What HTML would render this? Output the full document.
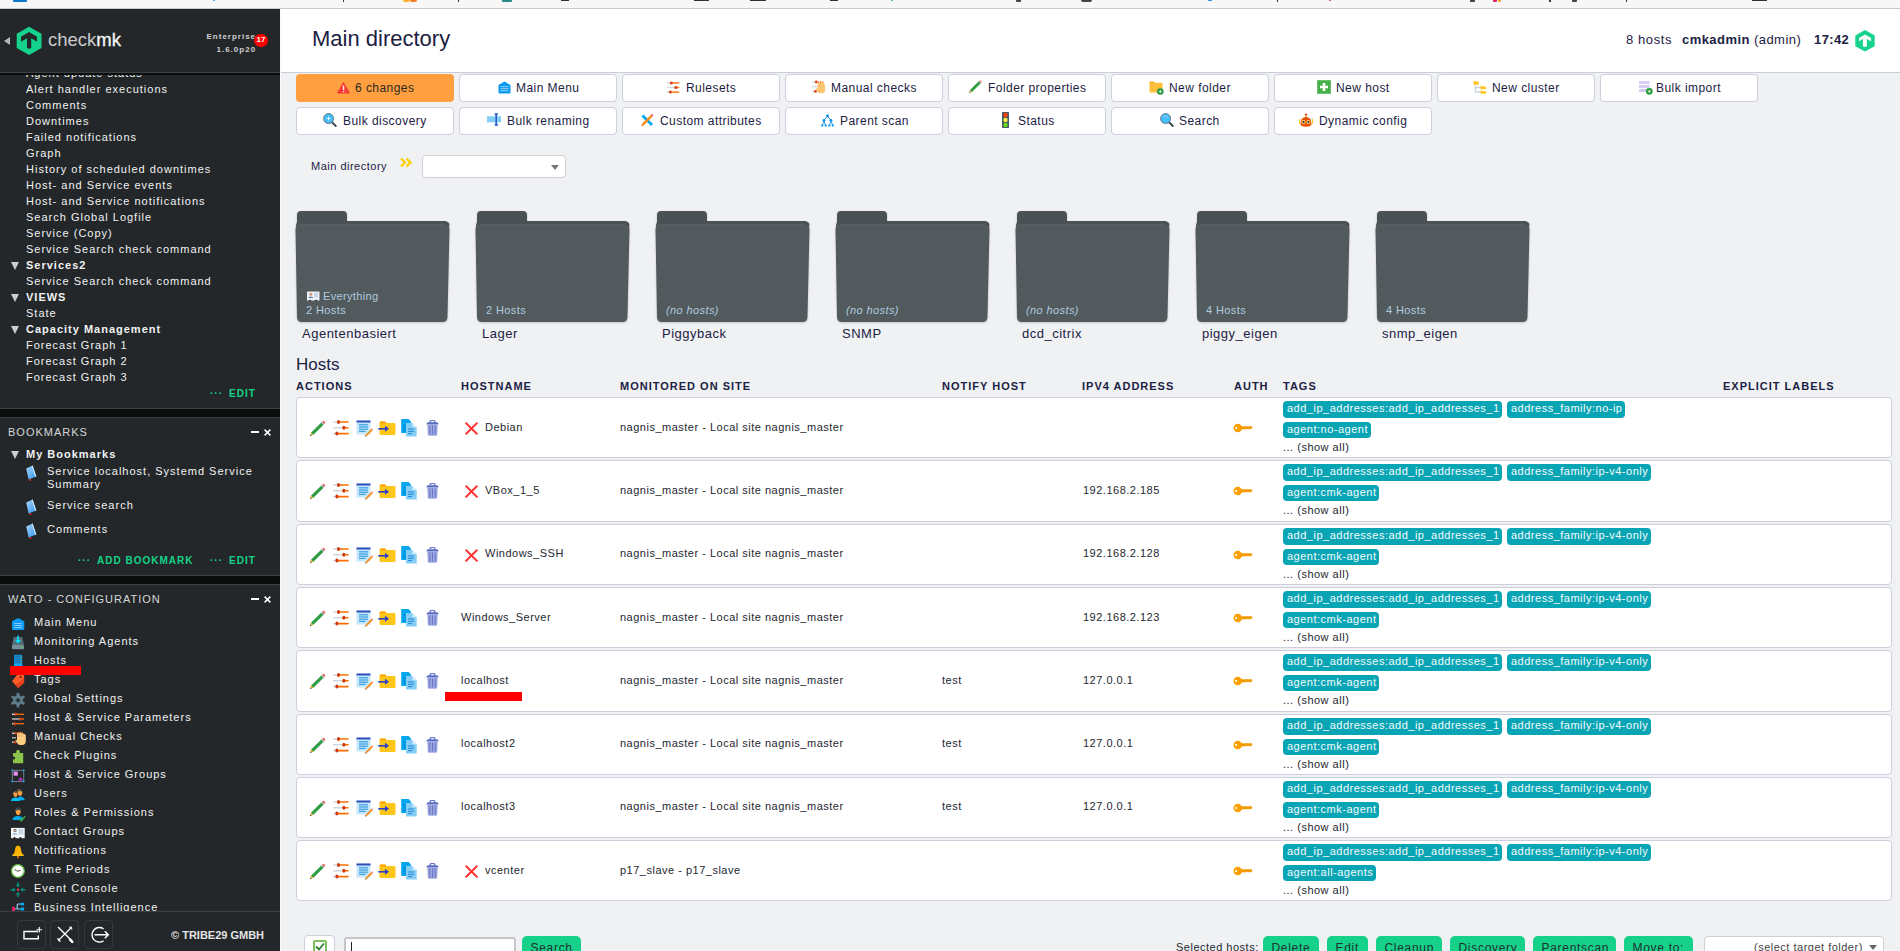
<!DOCTYPE html><html><head><meta charset="utf-8"><style>
*{margin:0;padding:0;box-sizing:border-box}
html,body{width:1900px;height:951px;overflow:hidden;background:#f0f1f3;font-family:"Liberation Sans",sans-serif;}
body{position:relative}
.A{position:absolute;white-space:nowrap}
#topbar{position:absolute;left:0;top:0;width:1900px;height:9px;background:#f7f7f7;border-bottom:1px solid #c9c9c9}
#sb{position:absolute;left:0;top:9px;width:280px;height:942px;background:#232729}
.st{position:absolute;white-space:nowrap;color:#f2f2f2;font-size:11px;letter-spacing:1px;line-height:16px;height:16px}
.b{font-weight:bold}
.tri{position:absolute;width:0;height:0;border-left:4.5px solid transparent;border-right:4.5px solid transparent;border-top:8px solid #cdcdcd}
.sep{position:absolute;left:0;width:280px;background:#0b0d0d;border-top:1px solid #3b4043;border-bottom:1px solid #3b4043}
#main{position:absolute;left:280px;top:9px;width:1620px;height:942px;background:#f0f1f3;border-left:1px solid #fafafb}
#hdr{position:absolute;left:281px;top:9px;width:1619px;height:64px;background:#fff;border-bottom:1px solid #cbcdd8}
.btn{position:absolute;width:158px;height:28px;background:#fff;border:1px solid #cdd0dc;border-radius:4px;font-size:13px;color:#1c2143;display:flex;align-items:center;justify-content:center;white-space:nowrap}
.btn svg{margin-right:6px;flex:none}
.g{color:#13d389}
.mt{position:absolute;white-space:nowrap;color:#1c2143;font-size:11px;letter-spacing:0.5px}
</style></head><body>
<div id="topbar"></div>
<div class="A" style="left:12.6px;top:0;width:14.6px;height:1.8px;background:#0b78c8;border-radius:0 0 1.5px 1.5px"></div>
<div class="A" style="left:212.5px;top:0;width:2.5px;height:1.2px;background:#1e88e5;border-radius:0 0 1px 1px"></div>
<div class="A" style="left:342.5px;top:0;width:1.3px;height:1.6px;background:#333;border-radius:0 0 0px 0px"></div>
<div class="A" style="left:403px;top:0;width:7px;height:1.7px;background:#ffb02e;border-radius:0 0 2px 2px"></div>
<div class="A" style="left:410px;top:0;width:7px;height:1.7px;background:#f57c20;border-radius:0 0 2px 2px"></div>
<div class="A" style="left:458px;top:0;width:1.3px;height:1.6px;background:#333;border-radius:0 0 0px 0px"></div>
<div class="A" style="left:502px;top:0;width:10px;height:1.8px;background:#2a8a8a;border-radius:0 0 1px 1px"></div>
<div class="A" style="left:561px;top:0;width:8px;height:0.8px;background:#333;border-radius:0 0 0px 0px"></div>
<div class="A" style="left:694px;top:0;width:15px;height:1px;background:#333;border-radius:0 0 0px 0px"></div>
<div class="A" style="left:750px;top:0;width:15.5px;height:1px;background:#333;border-radius:0 0 0px 0px"></div>
<div class="A" style="left:830px;top:0;width:8px;height:0.8px;background:#333;border-radius:0 0 0px 0px"></div>
<div class="A" style="left:890.5px;top:0;width:2.5px;height:1px;background:#15b070;border-radius:0 0 1px 1px"></div>
<div class="A" style="left:1015.5px;top:0;width:5px;height:1.5px;background:#444;border-radius:0 0 1px 1px"></div>
<div class="A" style="left:1081px;top:0;width:10.5px;height:1.5px;background:#444;border-radius:0 0 3px 3px"></div>
<div class="A" style="left:1207.5px;top:0;width:4px;height:1px;background:#1e88e5;border-radius:0 0 1px 1px"></div>
<div class="A" style="left:1276.5px;top:0;width:1.3px;height:1.8px;background:#333;border-radius:0 0 0px 0px"></div>
<div class="A" style="left:1328.5px;top:0;width:2.5px;height:0.8px;background:#d32f2f;border-radius:0 0 1px 1px"></div>
<div class="A" style="left:1470px;top:0;width:5px;height:1.6px;background:#444;border-radius:0 0 1px 1px"></div>
<div class="A" style="left:1493px;top:0;width:3.5px;height:1.8px;background:#e91e63;border-radius:0 0 1px 1px"></div>
<div class="A" style="left:1497.5px;top:0;width:3.5px;height:1.8px;background:#ffa726;border-radius:0 0 1px 1px"></div>
<div class="A" style="left:1549.3px;top:0;width:1.3px;height:1.8px;background:#333;border-radius:0 0 0px 0px"></div>
<div class="A" style="left:1572px;top:0;width:5px;height:1.6px;background:#444;border-radius:0 0 1px 1px"></div>
<div class="A" style="left:1625.8px;top:0;width:1.3px;height:1.8px;background:#333;border-radius:0 0 0px 0px"></div>
<div class="A" style="left:1752px;top:0;width:15px;height:0.8px;background:#333;border-radius:0 0 0px 0px"></div>
<div id="sb"></div>
<div id="main"></div>
<div id="hdr"></div>
<div class="A" style="left:4px;top:37px;width:0;height:0;border-top:4px solid transparent;border-bottom:4px solid transparent;border-right:6px solid #b4b6b7"></div>
<svg class="A" style="left:16px;top:26px" width="26" height="30" viewBox="0 0 26 30"><polygon points="13.1,0.7 25.5,7.8 25.5,22 13.1,29.1 0.7,22 0.7,7.8" fill="#15d38c"/><path d="M13 6 L20.9 10.8 L20.9 15.7 L15.2 12.3 L15.2 21.8 Q13.1 23.5 11 21.8 L11 12.3 L5 15.7 L5 10.8 Z" fill="#232729"/></svg>
<div class="A" style="left:48px;top:30px;font-size:18.5px;color:#c9cacb;line-height:20px;letter-spacing:0px">check<span style="color:#f6f6f6;-webkit-text-stroke:0.3px #f6f6f6">mk</span></div>
<div class="A" style="left:206.5px;top:32px;font-size:8px;font-weight:bold;color:#cfd0d1;letter-spacing:1px;line-height:10px">Enterprise</div>
<div class="A" style="left:216.5px;top:45px;font-size:8px;font-weight:bold;color:#cfd0d1;letter-spacing:1px;line-height:10px">1.6.0p20</div>
<div class="A" style="left:254px;top:34px;width:14px;height:12.5px;border-radius:7px;background:#f00;color:#fff;font-size:8px;font-weight:bold;text-align:center;line-height:12.5px">17</div>
<div class="A" style="left:0;top:72px;width:280px;height:1px;background:#3b4043"></div>
<div class="A" style="left:0;top:73px;width:280px;height:2px;background:#0b0d0d"></div>
<div class="A" style="left:0;top:75px;width:280px;height:333px;overflow:hidden"><div class="A" style="left:0;top:-75px;width:280px;height:600px">
<div class="st" style="left:26px;top:65px">Agent update status</div>
<div class="st" style="left:26px;top:81px">Alert handler executions</div>
<div class="st" style="left:26px;top:97px">Comments</div>
<div class="st" style="left:26px;top:113px">Downtimes</div>
<div class="st" style="left:26px;top:129px">Failed notifications</div>
<div class="st" style="left:26px;top:145px">Graph</div>
<div class="st" style="left:26px;top:161px">History of scheduled downtimes</div>
<div class="st" style="left:26px;top:177px">Host- and Service events</div>
<div class="st" style="left:26px;top:193px">Host- and Service notifications</div>
<div class="st" style="left:26px;top:209px">Search Global Logfile</div>
<div class="st" style="left:26px;top:225px">Service (Copy)</div>
<div class="st" style="left:26px;top:241px">Service Search check command</div>
<div class="tri" style="left:11px;top:262px"></div>
<div class="st b" style="left:26px;top:257px">Services2</div>
<div class="st" style="left:26px;top:273px">Service Search check command</div>
<div class="tri" style="left:11px;top:294px"></div>
<div class="st b" style="left:26px;top:289px">VIEWS</div>
<div class="st" style="left:26px;top:305px">State</div>
<div class="tri" style="left:11px;top:326px"></div>
<div class="st b" style="left:26px;top:321px">Capacity Management</div>
<div class="st" style="left:26px;top:337px">Forecast Graph 1</div>
<div class="st" style="left:26px;top:353px">Forecast Graph 2</div>
<div class="st" style="left:26px;top:369px">Forecast Graph 3</div>
<div class="st b g" style="left:210px;top:386px;font-size:10px">&middot;&middot;&middot;</div>
<div class="st b g" style="left:229px;top:386px;font-size:10px">EDIT</div>
</div></div>
<div class="sep" style="top:408px;height:10px"></div>
<div class="st" style="left:8px;top:424px;color:#d7d8d9">BOOKMARKS</div>
<div class="A" style="left:251px;top:431px;width:8px;height:2px;background:#fff"></div>
<svg class="A" style="left:263.5px;top:429px" width="7" height="7" viewBox="0 0 7 7"><path d="M0.6 0.6L6.4 6.4M6.4 0.6L0.6 6.4" stroke="#fff" stroke-width="1.5"/></svg>
<div class="tri" style="left:11px;top:451px"></div>
<div class="st b" style="left:26px;top:446px">My Bookmarks</div>
<svg class="A" style="left:25px;top:465px" width="14" height="17" viewBox="0 0 14 17"><defs><linearGradient id="bg465" x1="0" y1="0" x2="1" y2="1"><stop offset="0" stop-color="#a8d8fc"/><stop offset="1" stop-color="#2f94ee"/></linearGradient></defs><path d="M1.2 3.4 L7.6 0.5 L11.3 11.6 L3.6 14.5 Z" fill="url(#bg465)"/><path d="M7.6 0.5 L11.3 11.6 L10.2 12 L6.8 1 Z" fill="#d4ecfd"/><circle cx="5.3" cy="15" r="0.9" fill="#ff2a1a"/></svg>
<div class="st" style="left:47px;top:465px;line-height:13px;height:26px;white-space:normal;width:230px">Service localhost, Systemd Service Summary</div>
<svg class="A" style="left:25px;top:499px" width="14" height="17" viewBox="0 0 14 17"><defs><linearGradient id="bg499" x1="0" y1="0" x2="1" y2="1"><stop offset="0" stop-color="#a8d8fc"/><stop offset="1" stop-color="#2f94ee"/></linearGradient></defs><path d="M1.2 3.4 L7.6 0.5 L11.3 11.6 L3.6 14.5 Z" fill="url(#bg499)"/><path d="M7.6 0.5 L11.3 11.6 L10.2 12 L6.8 1 Z" fill="#d4ecfd"/><circle cx="5.3" cy="15" r="0.9" fill="#ff2a1a"/></svg>
<div class="st" style="left:47px;top:497px">Service search</div>
<svg class="A" style="left:25px;top:523px" width="14" height="17" viewBox="0 0 14 17"><defs><linearGradient id="bg523" x1="0" y1="0" x2="1" y2="1"><stop offset="0" stop-color="#a8d8fc"/><stop offset="1" stop-color="#2f94ee"/></linearGradient></defs><path d="M1.2 3.4 L7.6 0.5 L11.3 11.6 L3.6 14.5 Z" fill="url(#bg523)"/><path d="M7.6 0.5 L11.3 11.6 L10.2 12 L6.8 1 Z" fill="#d4ecfd"/><circle cx="5.3" cy="15" r="0.9" fill="#ff2a1a"/></svg>
<div class="st" style="left:47px;top:521px">Comments</div>
<div class="st b g" style="left:78px;top:553px;font-size:10px">&middot;&middot;&middot;</div>
<div class="st b g" style="left:97px;top:553px;font-size:10px">ADD BOOKMARK</div>
<div class="st b g" style="left:210px;top:553px;font-size:10px">&middot;&middot;&middot;</div>
<div class="st b g" style="left:229px;top:553px;font-size:10px">EDIT</div>
<div class="sep" style="top:575px;height:10px"></div>
<div class="st" style="left:8px;top:591px;color:#d7d8d9">WATO - CONFIGURATION</div>
<div class="A" style="left:251px;top:598px;width:8px;height:2px;background:#fff"></div>
<svg class="A" style="left:263.5px;top:596px" width="7" height="7" viewBox="0 0 7 7"><path d="M0.6 0.6L6.4 6.4M6.4 0.6L0.6 6.4" stroke="#fff" stroke-width="1.5"/></svg>
<div class="A" style="left:0;top:585px;width:280px;height:326px;overflow:hidden"><div class="A" style="left:0;top:-585px;width:280px;height:951px">
<div class="st" style="left:34px;top:614px">Main Menu</div>
<svg class="A" style="left:10px;top:614px" width="18" height="20" viewBox="0 0 18 20"><path d="M8.1 3.9 L14.3 7.3 L14.3 15 Q14.3 16.1 13.2 16.1 L3.1 16.1 Q2 16.1 2 15 L2 7.3 Z" fill="#0b9bf2"/><rect x="4.3" y="9" width="7.6" height="0.9" fill="#8fd0fb"/><rect x="4.3" y="11" width="7.6" height="0.9" fill="#8fd0fb"/><rect x="4.3" y="13" width="7.6" height="0.9" fill="#8fd0fb"/></svg>
<div class="st" style="left:34px;top:633px">Monitoring Agents</div>
<svg class="A" style="left:10px;top:633px" width="18" height="20" viewBox="0 0 18 20"><path d="M3.5 5 Q3.5 4 4.5 4 L11.5 4 Q12.5 4 12.5 5 L14 12 L2 12 Z" fill="#546e7a"/><rect x="2" y="12" width="12" height="4.2" rx="0.8" fill="#78909c"/><circle cx="12" cy="14.2" r="0.7" fill="#64dd17"/><rect x="7.2" y="2.6" width="1.6" height="5" fill="#00e5ff"/><path d="M5 7 L11 7 L8 10.5 Z" fill="#00e5ff"/></svg>
<div class="st" style="left:34px;top:652px">Hosts</div>
<svg class="A" style="left:10px;top:652px" width="18" height="20" viewBox="0 0 18 20"><rect x="4" y="2.8" width="8.2" height="11.4" fill="#0a8fd8"/><rect x="4" y="11.5" width="8.2" height="2.7" fill="#12a8f5"/><g fill="#2a5f8a"><rect x="5" y="4.2" width="5.5" height="0.7"/><rect x="5" y="6.2" width="5.5" height="0.7"/><rect x="5" y="8.2" width="5.5" height="0.7"/><rect x="5" y="10.2" width="5.5" height="0.7"/></g><g fill="#8bc34a"><rect x="10.6" y="4.1" width="0.9" height="0.9"/><rect x="10.6" y="6.1" width="0.9" height="0.9"/><rect x="10.6" y="8.1" width="0.9" height="0.9"/><rect x="10.6" y="10.1" width="0.9" height="0.9"/></g></svg>
<div class="st" style="left:34px;top:671px">Tags</div>
<svg class="A" style="left:10px;top:671px" width="18" height="20" viewBox="0 0 18 20"><path d="M7 4 L13 4 Q14.1 4 14.1 5.1 L14.1 11.8 L8.2 16.9 L2 10.3 Z" fill="#ff5a2a"/><path d="M14.1 7.5 L14.1 11.8 L8.2 16.9 L5.2 13.7 Z" fill="#e8401a"/><circle cx="10.6" cy="6" r="0.9" fill="#232729"/></svg>
<div class="st" style="left:34px;top:690px">Global Settings</div>
<svg class="A" style="left:10px;top:690px" width="18" height="20" viewBox="0 0 18 20"><g fill="#5f7d8a"><circle cx="8" cy="10.2" r="5"/><rect x="6.6" y="2.8" width="2.8" height="14.8" rx="0.8"/><rect x="6.6" y="2.8" width="2.8" height="14.8" rx="0.8" transform="rotate(60 8 10.2)"/><rect x="6.6" y="2.8" width="2.8" height="14.8" rx="0.8" transform="rotate(120 8 10.2)"/></g><circle cx="8" cy="10.2" r="2.6" fill="#4a6470"/><circle cx="8" cy="10.2" r="1.5" fill="#232729"/></svg>
<div class="st" style="left:34px;top:709px">Host &amp; Service Parameters</div>
<svg class="A" style="left:10px;top:709px" width="18" height="20" viewBox="0 0 18 20"><g stroke-width="1.3"><path d="M2 5.3 H5" stroke="#e8e8e8"/><path d="M5 5.3 H14" stroke="#ff6d00"/><path d="M2 10 H10" stroke="#d0d0d0"/><path d="M10 10 H14" stroke="#ff6d00"/><path d="M2 14.7 H3.8" stroke="#e8e8e8"/><path d="M3.8 14.7 H14" stroke="#ff6d00"/></g><ellipse cx="5.8" cy="5.3" rx="1.2" ry="1.7" fill="#d84315"/><ellipse cx="10.4" cy="10" rx="1.2" ry="1.7" fill="#d84315"/><ellipse cx="4.5" cy="14.7" rx="1.2" ry="1.7" fill="#d84315"/></svg>
<div class="st" style="left:34px;top:728px">Manual Checks</div>
<svg class="A" style="left:10px;top:728px" width="18" height="20" viewBox="0 0 18 20"><g stroke-width="1.2"><path d="M2 5.3 H5" stroke="#e8e8e8"/><path d="M2 9.8 H6" stroke="#c8c8c8"/><path d="M2 14.2 H4" stroke="#e8e8e8"/></g><circle cx="5.8" cy="5.3" r="1.2" fill="#d84315"/><circle cx="5" cy="14.3" r="1.3" fill="#d84315"/><path d="M7 6 Q7 4.5 8 4.5 Q8.9 4.5 9 5.4 Q9.2 4.2 10.1 4.2 Q11 4.2 11.1 5.4 Q11.4 4.5 12.2 4.6 Q13 4.8 13 6 Q13.4 5.6 14 5.8 Q15.8 6.2 15.8 8 L15.8 13 Q15.8 16.9 12 16.9 L10 16.9 Q8 16.9 7 15 L5.4 12.4 Q6 11.5 7 12.2 Z" fill="#ffcc80"/><path d="M8 6 V9 M10 6 V9 M12 6 V9" stroke="#b8956a" stroke-width="0.5"/><circle cx="8.2" cy="4.6" r="0.7" fill="#ff6d00"/><circle cx="10.2" cy="4.3" r="0.7" fill="#ff6d00"/><circle cx="12.3" cy="4.6" r="0.7" fill="#ff6d00"/></svg>
<div class="st" style="left:34px;top:747px">Check Plugins</div>
<svg class="A" style="left:10px;top:747px" width="18" height="20" viewBox="0 0 18 20"><path d="M3 6 H6.3 Q5.8 3 8 2.8 Q10.2 3 9.7 6 H13.2 V16.2 H3 V12.6 Q5.2 12.8 5.2 11 Q5.2 9.2 3 9.4 Z" fill="#8bc34a"/></svg>
<div class="st" style="left:34px;top:766px">Host &amp; Service Groups</div>
<svg class="A" style="left:10px;top:766px" width="18" height="20" viewBox="0 0 18 20"><rect x="2.3" y="4.3" width="11.4" height="11.2" fill="none" stroke="#7a8a90" stroke-width="0.9"/><rect x="3.6" y="5.5" width="4.2" height="4.2" fill="#e48ef0"/><path d="M7.8 14.5 L10.7 11 L13.2 14.5 Z" fill="#b62cc8"/><g fill="#1e9cf0"><circle cx="2.3" cy="4.3" r="1"/><circle cx="13.7" cy="4.3" r="1"/><circle cx="2.3" cy="15.5" r="1"/><circle cx="13.7" cy="15.5" r="1"/></g></svg>
<div class="st" style="left:34px;top:785px">Users</div>
<svg class="A" style="left:10px;top:785px" width="18" height="20" viewBox="0 0 18 20"><path d="M7.5 4.8 Q10 3.8 11.2 5 Q12.5 6 12.2 8.5 Q12 10.8 10 11 Q8 10.8 7.8 8.5 Z" fill="#ffa040"/><path d="M7.7 6.5 Q8.5 4 10.5 4.3 Q12.3 4.6 12.3 6.5 Q10.5 5.5 7.7 6.5Z" fill="#37474f"/><path d="M7 15.3 Q7.5 11.5 10 11.5 Q13.5 11.5 15.1 15.3 Z" fill="#03a9f4"/><path d="M3.3 7.5 Q4.5 6.3 6 6.5 Q7.5 6.8 7.5 9 Q7.3 12 5.5 12 Q3.6 11.8 3.4 9.5 Z" fill="#ffa040"/><path d="M3.3 8 Q3.8 6.3 5.5 6.4 Q7.4 6.6 7.4 8.2 Q5 7.5 3.3 8Z" fill="#795548"/><path d="M0.8 16 Q1.3 12.5 5.5 12.5 Q9.7 12.5 10.2 16 Z" fill="#00bcf8"/></svg>
<div class="st" style="left:34px;top:804px">Roles &amp; Permissions</div>
<svg class="A" style="left:10px;top:804px" width="18" height="20" viewBox="0 0 18 20"><path d="M5.5 6 Q6.5 3.5 8.5 3.8 Q10.7 4.2 10.7 6.8 Q10.6 11 8.3 11.2 Q6 11 5.8 8 Z" fill="#ffa040"/><path d="M5.6 6.8 Q6 3.3 8.5 3.4 Q11 3.6 10.8 6.8 Q8.5 5.3 5.6 6.8Z" fill="#37474f"/><path d="M2.3 16 Q3 12 8.2 12 Q12 12 13.5 14.5 L12 16 Z" fill="#03a9f4"/><path d="M9.5 15 L11.3 16.8 L15.1 12.3" stroke="#43a047" stroke-width="1.5" fill="none"/></svg>
<div class="st" style="left:34px;top:823px">Contact Groups</div>
<svg class="A" style="left:10px;top:823px" width="18" height="20" viewBox="0 0 18 20"><rect x="1" y="4.9" width="13.7" height="10.3" fill="#f4f6f8"/><rect x="8.5" y="6" width="4.8" height="5.5" fill="#c5d5e5"/><circle cx="5" cy="7.5" r="1.5" fill="#5d4037"/><circle cx="5" cy="7.7" r="0.8" fill="#fff"/><path d="M2.5 11 Q5 8.8 7.5 11 V11.5 H2.5Z" fill="#90b0d0"/><circle cx="4.5" cy="15" r="1" fill="#111"/><circle cx="10.5" cy="15" r="1" fill="#111"/></svg>
<div class="st" style="left:34px;top:842px">Notifications</div>
<svg class="A" style="left:10px;top:842px" width="18" height="20" viewBox="0 0 18 20"><path d="M8 3.5 Q10.8 3.8 11 8 Q11 11 14.1 13.8 L2 13.8 Q5 11 5 8 Q5.2 3.8 8 3.5 Z" fill="#ffb300"/><rect x="7.2" y="13.8" width="1.6" height="2.3" fill="#f57c00"/><rect x="2.5" y="12.8" width="11" height="1" fill="#ffca28"/></svg>
<div class="st" style="left:34px;top:861px">Time Periods</div>
<svg class="A" style="left:10px;top:861px" width="18" height="20" viewBox="0 0 18 20"><circle cx="7.9" cy="10" r="6.4" fill="#fff" stroke="#5cb338" stroke-width="1.3"/><path d="M4.5 8.5 Q6 8.8 7 10.3 Q8.5 9.8 10.5 9.5" stroke="#333" stroke-width="0.9" fill="none"/><path d="M3.5 7 Q5 4.5 8 4.4" stroke="#c8e6c0" stroke-width="1" fill="none"/></svg>
<div class="st" style="left:34px;top:880px">Event Console</div>
<svg class="A" style="left:10px;top:880px" width="18" height="20" viewBox="0 0 18 20"><g fill="#009688"><rect x="7.3" y="2.2" width="1.4" height="3"/><path d="M5.7 4.8 H10.3 L8 7.3 Z"/><rect x="7.3" y="14.3" width="1.4" height="3"/><path d="M5.7 14.6 H10.3 L8 12.1 Z"/><rect x="0.6" y="9" width="3" height="1.4"/><path d="M3.2 7.4 V12 L5.7 9.7 Z"/><rect x="12.4" y="9" width="3" height="1.4"/><path d="M12.8 7.4 V12 L10.3 9.7 Z"/></g><rect x="7" y="8.7" width="2" height="2" fill="#f44336"/></svg>
<div class="st" style="left:34px;top:899px">Business Intelligence</div>
<svg class="A" style="left:10px;top:899px" width="18" height="20" viewBox="0 0 18 20"><rect x="2" y="7.8" width="3" height="4.2" fill="#e91e63"/><path d="M5 10 H11 M7.2 10 V6 Q7.2 5 8.2 5 H11" stroke="#90caf9" stroke-width="1.2" fill="none"/><rect x="10.8" y="3.8" width="3.3" height="2.6" fill="#03a9f4"/><rect x="10.8" y="8.5" width="3.3" height="3" fill="#03a9f4"/></svg>
</div></div>
<div class="A" style="left:9.5px;top:666px;width:71px;height:9px;background:#ff0000"></div>
<div class="A" style="left:0;top:911px;width:280px;height:1px;background:#3b4043"></div>
<div class="A" style="left:16.5px;top:920px;width:29px;height:29px;border:1px solid #34393c;border-radius:4px"></div>
<div class="A" style="left:50px;top:920px;width:29px;height:29px;border:1px solid #34393c;border-radius:4px"></div>
<div class="A" style="left:84px;top:920px;width:29px;height:29px;border:1px solid #34393c;border-radius:4px"></div>
<svg class="A" style="left:17px;top:920px" width="100" height="30" viewBox="0 0 100 30"><path d="M21 11.5 H7 V18.8 H21.3 V15.5" stroke="#fff" stroke-width="1.4" fill="none"/><path d="M22.3 7 V12.5 M19.5 9.7 H25" stroke="#fff" stroke-width="1.1"/><path d="M41 7 L54.5 20.6" stroke="#fff" stroke-width="1.4"/><path d="M53 19.5 L55.3 21.8" stroke="#fff" stroke-width="2.5" stroke-linecap="round"/><path d="M54.8 7 L41.2 20.6" stroke="#fff" stroke-width="1.3"/><path d="M52.6 6.6 Q53.5 8.5 55.2 9.2 M40.2 18.6 Q42.5 19 43 21.8" stroke="#fff" stroke-width="1.2" fill="none"/><path d="M86.5 8.8 A7.3 7.3 0 1 0 86.5 20.8" stroke="#fff" stroke-width="1.4" fill="none"/><path d="M77.5 14.8 H91 M87.8 11.3 L91.3 14.8 L87.8 18.3" stroke="#fff" stroke-width="1.5" fill="none"/></svg>
<div class="A b" style="left:171px;top:929px;font-size:11px;color:#e4e4e4;letter-spacing:0px;line-height:13px">&copy; TRIBE29 GMBH</div>
<div class="A" style="left:312px;top:26px;font-size:22px;color:#1c2143;letter-spacing:0px;line-height:26px">Main directory</div>
<div class="A" style="left:1626px;top:32px;font-size:13px;color:#1c2143;letter-spacing:0.6px;line-height:15px">8 hosts</div>
<div class="A" style="left:1682px;top:32px;font-size:13px;color:#1c2143;letter-spacing:0.45px;line-height:15px"><b>cmkadmin</b> (admin)</div>
<div class="A" style="left:1814px;top:32px;font-size:13px;color:#1c2143;letter-spacing:0.4px;line-height:15px"><b>17:42</b></div>
<svg class="A" style="left:1855px;top:29.6px" width="20" height="22" viewBox="0 0 20 22"><polygon points="10,0 19.7,5.5 19.7,16.2 10,21.6 0.3,16.2 0.3,5.5" fill="#15d38c"/><path d="M10 4.4 L16.1 8 L16.1 11.3 L11.9 8.9 L11.9 16.2 Q10 17.6 7.9 16.2 L7.9 8.9 L4 11.3 L4 8 Z" fill="#fff"/></svg>
<div class="A" style="left:296px;top:74px;width:158px;height:28px;background:#ff9f40;border-radius:4px"></div>
<div class="A" style="left:337px;top:82px;line-height:0"><svg width="13" height="12" viewBox="0 0 13 12"><path d="M6.5 0.5 L12.5 11 L0.5 11 Z" fill="#f53b35" stroke="#f53b35" stroke-width="1" stroke-linejoin="round"/><rect x="5.8" y="3.5" width="1.5" height="4.5" fill="#fde6e0"/><rect x="5.8" y="9" width="1.5" height="1.2" fill="#fde6e0"/></svg></div>
<div class="A" style="left:355px;top:81px;font-size:12px;color:#2c2a1e;letter-spacing:0.45px;line-height:14px">6 changes</div>
<div class="A" style="left:459px;top:74px;width:158px;height:28px;background:#fff;border:1px solid #cdd0dc;border-radius:4px"></div>
<div class="A" style="left:498px;top:81px;line-height:0"><svg width="13" height="13" viewBox="0 0 13 13"><path d="M6.5 0.5 L12.5 4 L12.5 11.5 Q12.5 12.5 11.5 12.5 L1.5 12.5 Q0.5 12.5 0.5 11.5 L0.5 4 Z" fill="#0a9af2"/><rect x="2.5" y="5.2" width="8" height="0.9" fill="#9fd6fb"/><rect x="2.5" y="7.2" width="8" height="0.9" fill="#9fd6fb"/><rect x="2.5" y="9.2" width="8" height="0.9" fill="#9fd6fb"/></svg></div>
<div class="A" style="left:516px;top:81px;font-size:12px;color:#1c2143;letter-spacing:0.45px;line-height:14px">Main Menu</div>
<div class="A" style="left:622px;top:74px;width:158px;height:28px;background:#fff;border:1px solid #cdd0dc;border-radius:4px"></div>
<div class="A" style="left:667px;top:81px;line-height:0"><svg width="13" height="13" viewBox="0 0 13 13"><g stroke-width="1.4"><path d="M0 1.9H3.5" stroke="#cfd8dc"/><path d="M3.5 1.9H12.2" stroke="#ff6d00"/><path d="M0 6.5H8.5" stroke="#cfd8dc"/><path d="M8.5 6.5H12.2" stroke="#ff6d00"/><path d="M0 11.1H2.5" stroke="#cfd8dc"/><path d="M2.5 11.1H12.2" stroke="#ff6d00"/></g><circle cx="4.3" cy="1.9" r="1.5" fill="#d84315"/><circle cx="8.8" cy="6.5" r="1.5" fill="#d84315"/><circle cx="3.3" cy="11.1" r="1.5" fill="#d84315"/></svg></div>
<div class="A" style="left:686px;top:81px;font-size:12px;color:#1c2143;letter-spacing:0.45px;line-height:14px">Rulesets</div>
<div class="A" style="left:785px;top:74px;width:158px;height:28px;background:#fff;border:1px solid #cdd0dc;border-radius:4px"></div>
<div class="A" style="left:812px;top:80px;line-height:0"><svg width="14" height="14" viewBox="0 0 14 14"><g stroke-width="1.3"><path d="M0 2H4" stroke="#cfd8dc"/><path d="M0 6.7H5" stroke="#cfd8dc"/><path d="M0 11.4H3" stroke="#cfd8dc"/></g><circle cx="4.3" cy="2" r="1.4" fill="#d84315"/><circle cx="3.5" cy="11.4" r="1.4" fill="#d84315"/><path d="M5.5 3.5 Q5.5 2 6.5 2 Q7.5 2 7.5 3 Q7.7 1.8 8.6 1.8 Q9.6 1.8 9.6 3 Q9.8 2 10.8 2.2 Q11.6 2.4 11.6 3.5 L12.4 4.2 Q13 4.5 13 6 L13 10 Q13 13.3 9.8 13.3 L8 13.3 Q6.5 13.3 5.5 11.8 L3.8 8.6 Q4.3 7.8 5.5 8.6 Z" fill="#ffc470"/><circle cx="6.5" cy="2" r="0.8" fill="#ff7a1a"/><circle cx="8.6" cy="1.8" r="0.8" fill="#ff7a1a"/><circle cx="10.8" cy="2.2" r="0.8" fill="#ff7a1a"/></svg></div>
<div class="A" style="left:831px;top:81px;font-size:12px;color:#1c2143;letter-spacing:0.45px;line-height:14px">Manual checks</div>
<div class="A" style="left:948px;top:74px;width:158px;height:28px;background:#fff;border:1px solid #cdd0dc;border-radius:4px"></div>
<div class="A" style="left:968px;top:80px;line-height:0"><svg width="14" height="14" viewBox="0 0 14 14"><path d="M1.2 12.8 L2 10 L10.8 1.2 L12.8 3.2 L4 12 Z" fill="#2e9d44"/><path d="M10.8 1.2 L11.6 0.4 Q12.2 -0.1 12.8 0.5 L13.5 1.2 Q14 1.8 13.5 2.4 L12.8 3.2 Z" fill="#f08a8a"/><path d="M1.2 12.8 L2 10 L4 12 Z" fill="#e8b060"/><path d="M1.2 12.8 L1.5 11.8 L2.2 12.5 Z" fill="#333"/></svg></div>
<div class="A" style="left:988px;top:81px;font-size:12px;color:#1c2143;letter-spacing:0.45px;line-height:14px">Folder properties</div>
<div class="A" style="left:1111px;top:74px;width:158px;height:28px;background:#fff;border:1px solid #cdd0dc;border-radius:4px"></div>
<div class="A" style="left:1149px;top:81px;line-height:0"><svg width="15" height="14" viewBox="0 0 15 14"><path d="M0.5 1.8 Q0.5 0.8 1.5 0.8 L5 0.8 L6 1.8 L12.5 1.8 Q13.5 1.8 13.5 2.8 L13.5 10.5 Q13.5 11.5 12.5 11.5 L1.5 11.5 Q0.5 11.5 0.5 10.5 Z" fill="#ffbf3a"/><path d="M0.5 1.8 Q0.5 0.8 1.5 0.8 L5 0.8 L6 1.8 L0.5 1.8Z" fill="#ff9f1a"/><circle cx="11.3" cy="10.5" r="3.3" fill="#249c3d"/><path d="M11.3 8.4 L11.8 10 L13.4 10.5 L11.8 11 L11.3 12.6 L10.8 11 L9.2 10.5 L10.8 10 Z" fill="#fff"/></svg></div>
<div class="A" style="left:1169px;top:81px;font-size:12px;color:#1c2143;letter-spacing:0.45px;line-height:14px">New folder</div>
<div class="A" style="left:1274px;top:74px;width:158px;height:28px;background:#fff;border:1px solid #cdd0dc;border-radius:4px"></div>
<div class="A" style="left:1317px;top:80px;line-height:0"><svg width="14" height="14" viewBox="0 0 14 14"><rect x="0.2" y="0.2" width="13.6" height="13.6" fill="#47b04b"/><path d="M5.7 3 H8.3 V5.7 H11 V8.3 H8.3 V11 H5.7 V8.3 H3 V5.7 H5.7 Z" fill="#fff"/></svg></div>
<div class="A" style="left:1336px;top:81px;font-size:12px;color:#1c2143;letter-spacing:0.45px;line-height:14px">New host</div>
<div class="A" style="left:1437px;top:74px;width:158px;height:28px;background:#fff;border:1px solid #cdd0dc;border-radius:4px"></div>
<div class="A" style="left:1473px;top:80px;line-height:0"><svg width="14" height="14" viewBox="0 0 14 14"><path d="M2.5 5 V12 H8 M2.5 7.5 H8" stroke="#c9d3da" stroke-width="1.3" fill="none"/><path d="M0.5 1 L2.5 1 L3 1.6 L5.8 1.6 L5.8 4.8 L0.5 4.8 Z" fill="#ffc629"/><path d="M7.5 5.8 L9.5 5.8 L10 6.4 L13.2 6.4 L13.2 9.2 L7.5 9.2 Z" fill="#ffc629"/><path d="M7.5 10.8 L9.5 10.8 L10 11.3 L13.2 11.3 L13.2 13.8 L7.5 13.8 Z" fill="#ffc629"/></svg></div>
<div class="A" style="left:1492px;top:81px;font-size:12px;color:#1c2143;letter-spacing:0.45px;line-height:14px">New cluster</div>
<div class="A" style="left:1600px;top:74px;width:158px;height:28px;background:#fff;border:1px solid #cdd0dc;border-radius:4px"></div>
<div class="A" style="left:1638px;top:80px;line-height:0"><svg width="15" height="15" viewBox="0 0 15 15"><rect x="1" y="1" width="10.5" height="3" fill="#d7ccf3"/><rect x="1" y="5" width="10.5" height="3" fill="#d7ccf3"/><rect x="1" y="9" width="7" height="3" fill="#d7ccf3"/><circle cx="11.3" cy="11.3" r="3.4" fill="#249c3d"/><path d="M11.3 9.2 L11.8 10.8 L13.4 11.3 L11.8 11.8 L11.3 13.4 L10.8 11.8 L9.2 11.3 L10.8 10.8 Z" fill="#fff"/></svg></div>
<div class="A" style="left:1656px;top:81px;font-size:12px;color:#1c2143;letter-spacing:0.45px;line-height:14px">Bulk import</div>
<div class="A" style="left:296px;top:107px;width:158px;height:28px;background:#fff;border:1px solid #cdd0dc;border-radius:4px"></div>
<div class="A" style="left:323px;top:113px;line-height:0"><svg width="14" height="14" viewBox="0 0 14 14"><path d="M8.8 9 L12.8 13" stroke="#37474f" stroke-width="1.8" stroke-linecap="round"/><circle cx="5.6" cy="5.6" r="5" fill="#47bdfb" stroke="#555" stroke-width="0.7"/><path d="M5.6 2.8 L6.1 5.1 L8.4 5.6 L6.1 6.1 L5.6 8.4 L5.1 6.1 L2.8 5.6 L5.1 5.1 Z" fill="#fff"/></svg></div>
<div class="A" style="left:343px;top:114px;font-size:12px;color:#1c2143;letter-spacing:0.45px;line-height:14px">Bulk discovery</div>
<div class="A" style="left:459px;top:107px;width:158px;height:28px;background:#fff;border:1px solid #cdd0dc;border-radius:4px"></div>
<div class="A" style="left:487px;top:113px;line-height:0"><svg width="14" height="13" viewBox="0 0 14 13"><rect x="0" y="3.3" width="14" height="6" fill="#81cdf5"/><path d="M9.3 0.8 Q6.8 0.4 9.3 2.3 V10.8 Q6.8 12.6 9.3 12.2 M9.3 2.3 Q11.8 0.4 9.3 0.8 M9.3 10.8 Q11.8 12.6 9.3 12.2" stroke="#2f5bc6" stroke-width="1.2" fill="none"/><path d="M9.3 2 V11" stroke="#2f5bc6" stroke-width="1.4"/></svg></div>
<div class="A" style="left:507px;top:114px;font-size:12px;color:#1c2143;letter-spacing:0.45px;line-height:14px">Bulk renaming</div>
<div class="A" style="left:622px;top:107px;width:158px;height:28px;background:#fff;border:1px solid #cdd0dc;border-radius:4px"></div>
<div class="A" style="left:640px;top:113px;line-height:0"><svg width="14" height="14" viewBox="0 0 14 14"><path d="M1.5 3.5 L3.5 1.5 L13 11 L11 13 Z" fill="#03a9f4"/><path d="M1.5 12.8 L2.2 10.5 L10.5 2.2 L12.2 3.9 L3.9 12.2 Z" fill="#ff8c1a"/><path d="M10.5 2.2 L11.5 1.2 Q12.2 0.7 12.7 1.2 L13 1.5 Q13.4 2 12.9 2.6 L12.2 3.9 Z" fill="#f05a5a"/><path d="M1.5 12.8 L1.9 11.5 L2.8 12.4 Z" fill="#333"/></svg></div>
<div class="A" style="left:660px;top:114px;font-size:12px;color:#1c2143;letter-spacing:0.45px;line-height:14px">Custom attributes</div>
<div class="A" style="left:785px;top:107px;width:158px;height:28px;background:#fff;border:1px solid #cdd0dc;border-radius:4px"></div>
<div class="A" style="left:821px;top:114px;line-height:0"><svg width="13" height="13" viewBox="0 0 13 13"><g stroke="#1e90e0" stroke-width="0.9" fill="none"><path d="M6.5 2 L3 6.5 L1.2 11.7 M3 6.5 L4.5 11.7 M6.5 2 L10 6.5 L11.8 11.7 M10 6.5 L8.4 11.7"/></g><g fill="#0b96f0"><rect x="5.2" y="0.6" width="2.6" height="2.6" rx="0.8"/><circle cx="3" cy="6.3" r="1.4"/><circle cx="10" cy="6.3" r="1.4"/><rect x="0.3" y="10.6" width="2" height="2" rx="0.5"/><rect x="3.7" y="10.6" width="2" height="2" rx="0.5"/><rect x="7.3" y="10.6" width="2" height="2" rx="0.5"/><rect x="10.7" y="10.6" width="2" height="2" rx="0.5"/></g></svg></div>
<div class="A" style="left:840px;top:114px;font-size:12px;color:#1c2143;letter-spacing:0.45px;line-height:14px">Parent scan</div>
<div class="A" style="left:948px;top:107px;width:158px;height:28px;background:#fff;border:1px solid #cdd0dc;border-radius:4px"></div>
<div class="A" style="left:1002px;top:112px;line-height:0"><svg width="7" height="16" viewBox="0 0 7 16"><rect x="0" y="0" width="7" height="16" rx="0.8" fill="#455a64"/><circle cx="3.5" cy="3" r="2.2" fill="#ff3d00"/><circle cx="3.5" cy="8" r="2.2" fill="#ffeb3b"/><circle cx="3.5" cy="13" r="2.2" fill="#64dd17"/></svg></div>
<div class="A" style="left:1018px;top:114px;font-size:12px;color:#1c2143;letter-spacing:0.45px;line-height:14px">Status</div>
<div class="A" style="left:1111px;top:107px;width:158px;height:28px;background:#fff;border:1px solid #cdd0dc;border-radius:4px"></div>
<div class="A" style="left:1160px;top:113px;line-height:0"><svg width="14" height="14" viewBox="0 0 14 14"><path d="M8.8 9 L12.8 13" stroke="#37474f" stroke-width="1.8" stroke-linecap="round"/><circle cx="5.6" cy="5.6" r="5" fill="#47bdfb" stroke="#555" stroke-width="0.7"/><path d="M3 4 Q5.6 2 8.2 4" stroke="#a8dcfb" stroke-width="0.7" fill="none"/></svg></div>
<div class="A" style="left:1179px;top:114px;font-size:12px;color:#1c2143;letter-spacing:0.45px;line-height:14px">Search</div>
<div class="A" style="left:1274px;top:107px;width:158px;height:28px;background:#fff;border:1px solid #cdd0dc;border-radius:4px"></div>
<div class="A" style="left:1298px;top:113px;line-height:0"><svg width="16" height="14" viewBox="0 0 16 14"><circle cx="8" cy="1.8" r="1.2" fill="#e64a19"/><rect x="7.5" y="2.5" width="1" height="2" fill="#f9a825"/><path d="M1 6.5 Q1 5.5 2 5.5 L2 11 Q1 11 1 10 Z" fill="#fbc02d"/><path d="M15 6.5 Q15 5.5 14 5.5 L14 11 Q15 11 15 10 Z" fill="#fbc02d"/><path d="M2.5 11 Q2.5 4 8 4 Q13.5 4 13.5 11 Q13.5 13.8 8 13.8 Q2.5 13.8 2.5 11 Z" fill="#e65100"/><circle cx="5.5" cy="9" r="2" fill="#ffd54f"/><circle cx="10.5" cy="9" r="2" fill="#ffd54f"/><circle cx="5.5" cy="9" r="1" fill="#1a237e"/><circle cx="10.5" cy="9" r="1" fill="#1a237e"/></svg></div>
<div class="A" style="left:1319px;top:114px;font-size:12px;color:#1c2143;letter-spacing:0.45px;line-height:14px">Dynamic config</div>
<div class="A" style="left:311px;top:160px;font-size:11px;color:#1c2143;letter-spacing:0.5px;line-height:13px">Main directory</div>
<svg class="A" style="left:400px;top:157px" width="12" height="12" viewBox="0 0 12 12"><path d="M1 1.5 L5 5.5 L1 9.5 M6.5 1.5 L10.5 5.5 L6.5 9.5" stroke="#ffd000" stroke-width="2.2" fill="none"/></svg>
<div class="A" style="left:422px;top:155px;width:144px;height:23px;background:#fff;border:1px solid #cfcfd4;border-radius:4px"></div>
<div class="A" style="left:551px;top:165px;width:0;height:0;border-left:4px solid transparent;border-right:4px solid transparent;border-top:5px solid #777"></div>
<svg class="A" style="left:295px;top:209px;filter:drop-shadow(0 1px 1px rgba(0,0,0,0.18))" width="156" height="116" viewBox="0 0 156 116"><rect x="2" y="2" width="50" height="20" rx="4" fill="#4b5255"/><rect x="1" y="12" width="153.5" height="8" rx="5" fill="#4b5255"/><path d="M5 15.5 H149.5 Q154.5 15.5 154.5 20.5 L152.5 108 Q152.5 113 147.5 113 H7 Q2 113 2 108 L0.5 20.5 Q0.5 15.5 5 15.5 Z" fill="#525a5e"/><path d="M5 15.8 H149.5" stroke="#5e666a" stroke-width="1"/></svg>
<div class="A" style="left:306px;top:304px;font-size:11px;color:#b0cade;letter-spacing:0.4px;line-height:13px">2 Hosts</div>
<svg class="A" style="left:307px;top:291px" width="13" height="10" viewBox="0 0 13 10"><rect x="0" y="0.5" width="12.5" height="9" fill="#eef3f8"/><rect x="7" y="1.5" width="4" height="5" fill="#c6d8ea"/><circle cx="3.8" cy="3.3" r="1.5" fill="#c99a7a"/><path d="M1.5 6.5 Q3.8 4.5 6 6.5 V7 H1.5Z" fill="#5b7fa6"/><path d="M1.5 10 Q3 7.5 4.5 10 M7.5 10 Q9 7.5 10.5 10" fill="#333"/></svg>
<div class="A" style="left:323px;top:290px;font-size:11px;color:#b0cade;letter-spacing:0.35px;line-height:13px">Everything</div>
<div class="A" style="left:302px;top:326px;font-size:13px;color:#1c2143;letter-spacing:0.5px;line-height:15px">Agentenbasiert</div>
<svg class="A" style="left:475px;top:209px;filter:drop-shadow(0 1px 1px rgba(0,0,0,0.18))" width="156" height="116" viewBox="0 0 156 116"><rect x="2" y="2" width="50" height="20" rx="4" fill="#4b5255"/><rect x="1" y="12" width="153.5" height="8" rx="5" fill="#4b5255"/><path d="M5 15.5 H149.5 Q154.5 15.5 154.5 20.5 L152.5 108 Q152.5 113 147.5 113 H7 Q2 113 2 108 L0.5 20.5 Q0.5 15.5 5 15.5 Z" fill="#525a5e"/><path d="M5 15.8 H149.5" stroke="#5e666a" stroke-width="1"/></svg>
<div class="A" style="left:486px;top:304px;font-size:11px;color:#b0cade;letter-spacing:0.4px;line-height:13px">2 Hosts</div>
<div class="A" style="left:482px;top:326px;font-size:13px;color:#1c2143;letter-spacing:0.5px;line-height:15px">Lager</div>
<svg class="A" style="left:655px;top:209px;filter:drop-shadow(0 1px 1px rgba(0,0,0,0.18))" width="156" height="116" viewBox="0 0 156 116"><rect x="2" y="2" width="50" height="20" rx="4" fill="#4b5255"/><rect x="1" y="12" width="153.5" height="8" rx="5" fill="#4b5255"/><path d="M5 15.5 H149.5 Q154.5 15.5 154.5 20.5 L152.5 108 Q152.5 113 147.5 113 H7 Q2 113 2 108 L0.5 20.5 Q0.5 15.5 5 15.5 Z" fill="#525a5e"/><path d="M5 15.8 H149.5" stroke="#5e666a" stroke-width="1"/></svg>
<div class="A" style="left:666px;top:304px;font-size:11px;color:#b0cade;letter-spacing:0.4px;line-height:13px;font-style:italic">(no hosts)</div>
<div class="A" style="left:662px;top:326px;font-size:13px;color:#1c2143;letter-spacing:0.5px;line-height:15px">Piggyback</div>
<svg class="A" style="left:835px;top:209px;filter:drop-shadow(0 1px 1px rgba(0,0,0,0.18))" width="156" height="116" viewBox="0 0 156 116"><rect x="2" y="2" width="50" height="20" rx="4" fill="#4b5255"/><rect x="1" y="12" width="153.5" height="8" rx="5" fill="#4b5255"/><path d="M5 15.5 H149.5 Q154.5 15.5 154.5 20.5 L152.5 108 Q152.5 113 147.5 113 H7 Q2 113 2 108 L0.5 20.5 Q0.5 15.5 5 15.5 Z" fill="#525a5e"/><path d="M5 15.8 H149.5" stroke="#5e666a" stroke-width="1"/></svg>
<div class="A" style="left:846px;top:304px;font-size:11px;color:#b0cade;letter-spacing:0.4px;line-height:13px;font-style:italic">(no hosts)</div>
<div class="A" style="left:842px;top:326px;font-size:13px;color:#1c2143;letter-spacing:0.5px;line-height:15px">SNMP</div>
<svg class="A" style="left:1015px;top:209px;filter:drop-shadow(0 1px 1px rgba(0,0,0,0.18))" width="156" height="116" viewBox="0 0 156 116"><rect x="2" y="2" width="50" height="20" rx="4" fill="#4b5255"/><rect x="1" y="12" width="153.5" height="8" rx="5" fill="#4b5255"/><path d="M5 15.5 H149.5 Q154.5 15.5 154.5 20.5 L152.5 108 Q152.5 113 147.5 113 H7 Q2 113 2 108 L0.5 20.5 Q0.5 15.5 5 15.5 Z" fill="#525a5e"/><path d="M5 15.8 H149.5" stroke="#5e666a" stroke-width="1"/></svg>
<div class="A" style="left:1026px;top:304px;font-size:11px;color:#b0cade;letter-spacing:0.4px;line-height:13px;font-style:italic">(no hosts)</div>
<div class="A" style="left:1022px;top:326px;font-size:13px;color:#1c2143;letter-spacing:0.5px;line-height:15px">dcd_citrix</div>
<svg class="A" style="left:1195px;top:209px;filter:drop-shadow(0 1px 1px rgba(0,0,0,0.18))" width="156" height="116" viewBox="0 0 156 116"><rect x="2" y="2" width="50" height="20" rx="4" fill="#4b5255"/><rect x="1" y="12" width="153.5" height="8" rx="5" fill="#4b5255"/><path d="M5 15.5 H149.5 Q154.5 15.5 154.5 20.5 L152.5 108 Q152.5 113 147.5 113 H7 Q2 113 2 108 L0.5 20.5 Q0.5 15.5 5 15.5 Z" fill="#525a5e"/><path d="M5 15.8 H149.5" stroke="#5e666a" stroke-width="1"/></svg>
<div class="A" style="left:1206px;top:304px;font-size:11px;color:#b0cade;letter-spacing:0.4px;line-height:13px">4 Hosts</div>
<div class="A" style="left:1202px;top:326px;font-size:13px;color:#1c2143;letter-spacing:0.5px;line-height:15px">piggy_eigen</div>
<svg class="A" style="left:1375px;top:209px;filter:drop-shadow(0 1px 1px rgba(0,0,0,0.18))" width="156" height="116" viewBox="0 0 156 116"><rect x="2" y="2" width="50" height="20" rx="4" fill="#4b5255"/><rect x="1" y="12" width="153.5" height="8" rx="5" fill="#4b5255"/><path d="M5 15.5 H149.5 Q154.5 15.5 154.5 20.5 L152.5 108 Q152.5 113 147.5 113 H7 Q2 113 2 108 L0.5 20.5 Q0.5 15.5 5 15.5 Z" fill="#525a5e"/><path d="M5 15.8 H149.5" stroke="#5e666a" stroke-width="1"/></svg>
<div class="A" style="left:1386px;top:304px;font-size:11px;color:#b0cade;letter-spacing:0.4px;line-height:13px">4 Hosts</div>
<div class="A" style="left:1382px;top:326px;font-size:13px;color:#1c2143;letter-spacing:0.5px;line-height:15px">snmp_eigen</div>
<div class="A" style="left:296px;top:355px;font-size:17px;color:#1c2143;letter-spacing:0px;line-height:19px">Hosts</div>
<div class="A" style="left:296px;top:380px;font-size:11px;color:#1c2143;letter-spacing:1px;line-height:13px;font-weight:bold">ACTIONS</div>
<div class="A" style="left:461px;top:380px;font-size:11px;color:#1c2143;letter-spacing:1px;line-height:13px;font-weight:bold">HOSTNAME</div>
<div class="A" style="left:620px;top:380px;font-size:11px;color:#1c2143;letter-spacing:1px;line-height:13px;font-weight:bold">MONITORED ON SITE</div>
<div class="A" style="left:942px;top:380px;font-size:11px;color:#1c2143;letter-spacing:1px;line-height:13px;font-weight:bold">NOTIFY HOST</div>
<div class="A" style="left:1082px;top:380px;font-size:11px;color:#1c2143;letter-spacing:1px;line-height:13px;font-weight:bold">IPV4 ADDRESS</div>
<div class="A" style="left:1234px;top:380px;font-size:11px;color:#1c2143;letter-spacing:1px;line-height:13px;font-weight:bold">AUTH</div>
<div class="A" style="left:1283px;top:380px;font-size:11px;color:#1c2143;letter-spacing:1px;line-height:13px;font-weight:bold">TAGS</div>
<div class="A" style="left:1723px;top:380px;font-size:11px;color:#1c2143;letter-spacing:1px;line-height:13px;font-weight:bold">EXPLICIT LABELS</div>
<div class="A" style="left:296px;top:397px;width:1596px;height:61px;background:#fff;border:1px solid #cdd0dc;border-radius:4px"></div>
<div class="A" style="left:309px;top:420px;line-height:0"><svg width="17" height="17" viewBox="0 0 17 17"><path d="M1.2 15.8 L2.2 12.6 L12.6 2.2 L14.8 4.4 L4.4 14.8 Z" fill="#2c9c45"/><path d="M12.6 2.2 L13.8 1 Q14.5 0.4 15.2 1 L16 1.8 Q16.6 2.5 16 3.2 L14.8 4.4 Z" fill="#f06c6c"/><path d="M12.1 2.7 L13 1.8 L15.2 4 L14.3 4.9Z" fill="#b0c8d0"/><path d="M1.2 15.8 L2.2 12.6 L4.4 14.8 Z" fill="#f2b33d"/><path d="M1 16 L1.5 14.5 L2.5 15.5 Z" fill="#333"/></svg></div>
<div class="A" style="left:333px;top:420px;line-height:0"><svg width="16" height="16" viewBox="0 0 16 16"><g stroke-width="1.6" stroke-linecap="round"><path d="M0.8 2 H5" stroke="#cfd8dc"/><path d="M5 2 H15" stroke="#ff6d00"/><path d="M0.8 7.8 H10" stroke="#cfd8dc"/><path d="M10 7.8 H15" stroke="#ff6d00"/><path d="M0.8 13.6 H3.5" stroke="#cfd8dc"/><path d="M3.5 13.6 H15" stroke="#ff6d00"/></g><ellipse cx="5.5" cy="2" rx="1.5" ry="2" fill="#cc3a0c"/><ellipse cx="10.9" cy="7.8" rx="1.5" ry="2" fill="#cc3a0c"/><ellipse cx="3.9" cy="13.6" rx="1.5" ry="2" fill="#cc3a0c"/></svg></div>
<div class="A" style="left:356px;top:420px;line-height:0"><svg width="17" height="17" viewBox="0 0 17 17"><rect x="0.5" y="0.5" width="14" height="14" fill="#c5e7fb"/><rect x="0.5" y="0.5" width="14" height="2" fill="#2f51b8"/><rect x="3" y="4.2" width="9" height="1.2" fill="#3a9ee0"/><rect x="3" y="6.4" width="9" height="1.2" fill="#3a9ee0"/><rect x="3" y="8.6" width="9" height="1.2" fill="#3a9ee0"/><rect x="3" y="10.8" width="6.5" height="1.2" fill="#3a9ee0"/><path d="M9.3 16.4 L9.9 14.4 L15.2 9.1 L16.5 10.4 L11.2 15.7 Z" fill="#f7901e"/><path d="M15.2 9.1 L15.7 8.6 Q16.1 8.3 16.5 8.7 L16.8 9 Q17.1 9.4 16.8 9.8 L16.5 10.4Z" fill="#f06c6c"/><path d="M9.1 16.6 L9.5 15.3 L10.4 16.2 Z" fill="#333"/></svg></div>
<div class="A" style="left:378px;top:421px;line-height:0"><svg width="18" height="15" viewBox="0 0 18 15"><path d="M1.5 2.2 Q1.5 0.5 3 0.5 L6.5 0.5 Q7.5 0.5 8 1.5 L8.3 2 L16.5 2 Q17.5 2 17.5 3.5 L17.5 12.5 Q17.5 14 16 14 L3 14 Q1.5 14 1.5 12.5 Z" fill="#ffc61a"/><path d="M1.5 2.2 Q1.5 0.5 3 0.5 L6.5 0.5 Q7.5 0.5 8 1.5 L8.3 2.2Z" fill="#ffa000"/><path d="M0.3 7.8 H8.5" stroke="#2a3fc4" stroke-width="1.6"/><path d="M7 4.8 L11 7.8 L7 10.8 Z" fill="#2a3fc4"/></svg></div>
<div class="A" style="left:401px;top:419px;line-height:0"><svg width="16" height="18" viewBox="0 0 16 18"><path d="M0.2 0 H7.5 L10 2.5 V14 H0.2 Z" fill="#05a6f0"/><rect x="2.5" y="5.5" width="2" height="1" fill="#0277c8"/><rect x="2.5" y="8.5" width="2" height="1" fill="#0277c8"/><rect x="2.5" y="11" width="2" height="1" fill="#0277c8"/><path d="M5 4 H11.5 L15.7 8.2 V17.5 H5 Z" fill="#86cdf6"/><path d="M11.5 4 V8.2 H15.7Z" fill="#d4eefc"/><rect x="7" y="9.5" width="6" height="1" fill="#1e88d8"/><rect x="7" y="11.8" width="6" height="1" fill="#1e88d8"/><rect x="7" y="14.1" width="4" height="1" fill="#1e88d8"/></svg></div>
<div class="A" style="left:426px;top:420px;line-height:0"><svg width="13" height="16" viewBox="0 0 13 16"><path d="M4 2.2 Q4 0.3 6.5 0.3 Q9 0.3 9 2.2" stroke="#6a7bc8" stroke-width="1.3" fill="none"/><path d="M0.5 4.4 Q0.5 2.2 2.5 2.2 H10.5 Q12.5 2.2 12.5 4.4 Z" fill="#5668c0"/><path d="M1.3 4.6 H11.7 L11.2 14.6 Q11.1 15.7 10 15.7 H3 Q1.9 15.7 1.8 14.6 Z" fill="#9aa6dd"/><g fill="#6878c8"><rect x="3.3" y="5.5" width="1" height="9"/><rect x="6" y="5.5" width="1" height="9"/><rect x="8.7" y="5.5" width="1" height="9"/></g></svg></div>
<div class="A" style="left:465px;top:422px;line-height:0"><svg width="13" height="13" viewBox="0 0 13 13"><path d="M1.2 1.2 L11.8 11.8 M11.8 1.2 L1.2 11.8" stroke="#ff3535" stroke-width="2" stroke-linecap="round"/></svg></div>
<div class="A" style="left:485px;top:421px;font-size:11px;color:#23272f;letter-spacing:0.5px;line-height:13px">Debian</div>
<div class="A" style="left:620px;top:421px;font-size:11px;color:#23272f;letter-spacing:0.5px;line-height:13px">nagnis_master - Local site nagnis_master</div>
<div class="A" style="left:1233px;top:423px;line-height:0"><svg width="20" height="10" viewBox="0 0 20 10"><circle cx="4.8" cy="5" r="4.3" fill="#ffa000"/><circle cx="3.1" cy="5" r="1.1" fill="#fff"/><path d="M8 3.3 H18.8 Q20 4.2 18.8 5.4 L18.2 6.3 L17.5 5.8 L16.8 6.6 L16 5.8 L15.2 6.6 L14.4 5.8 L13.6 6.6 L12.8 5.8 L12 6.6 L10.5 6.3 H8 Z" fill="#f29a00"/></svg></div>
<div class="A" style="left:1283px;top:401px;height:17px;background:#0aa5b5;border-radius:4px;color:#f4fbfc;font-size:11px;letter-spacing:0.5px;line-height:15px;padding:0 2.5px 0 4px">add_ip_addresses:add_ip_addresses_1</div>
<div class="A" style="left:1507px;top:401px;height:17px;background:#0aa5b5;border-radius:4px;color:#f4fbfc;font-size:11px;letter-spacing:0.5px;line-height:15px;padding:0 2.5px 0 4px">address_family:no-ip</div>
<div class="A" style="left:1283px;top:422px;height:16px;background:#0aa5b5;border-radius:4px;color:#f4fbfc;font-size:11px;letter-spacing:0.5px;line-height:14px;padding:0 2.5px 0 4px">agent:no-agent</div>
<div class="A" style="left:1283px;top:441px;font-size:11px;color:#23272f;letter-spacing:0.5px;line-height:13px">... (show all)</div>
<div class="A" style="left:296px;top:460px;width:1596px;height:62px;background:#fff;border:1px solid #cdd0dc;border-radius:4px"></div>
<div class="A" style="left:309px;top:483px;line-height:0"><svg width="17" height="17" viewBox="0 0 17 17"><path d="M1.2 15.8 L2.2 12.6 L12.6 2.2 L14.8 4.4 L4.4 14.8 Z" fill="#2c9c45"/><path d="M12.6 2.2 L13.8 1 Q14.5 0.4 15.2 1 L16 1.8 Q16.6 2.5 16 3.2 L14.8 4.4 Z" fill="#f06c6c"/><path d="M12.1 2.7 L13 1.8 L15.2 4 L14.3 4.9Z" fill="#b0c8d0"/><path d="M1.2 15.8 L2.2 12.6 L4.4 14.8 Z" fill="#f2b33d"/><path d="M1 16 L1.5 14.5 L2.5 15.5 Z" fill="#333"/></svg></div>
<div class="A" style="left:333px;top:483px;line-height:0"><svg width="16" height="16" viewBox="0 0 16 16"><g stroke-width="1.6" stroke-linecap="round"><path d="M0.8 2 H5" stroke="#cfd8dc"/><path d="M5 2 H15" stroke="#ff6d00"/><path d="M0.8 7.8 H10" stroke="#cfd8dc"/><path d="M10 7.8 H15" stroke="#ff6d00"/><path d="M0.8 13.6 H3.5" stroke="#cfd8dc"/><path d="M3.5 13.6 H15" stroke="#ff6d00"/></g><ellipse cx="5.5" cy="2" rx="1.5" ry="2" fill="#cc3a0c"/><ellipse cx="10.9" cy="7.8" rx="1.5" ry="2" fill="#cc3a0c"/><ellipse cx="3.9" cy="13.6" rx="1.5" ry="2" fill="#cc3a0c"/></svg></div>
<div class="A" style="left:356px;top:483px;line-height:0"><svg width="17" height="17" viewBox="0 0 17 17"><rect x="0.5" y="0.5" width="14" height="14" fill="#c5e7fb"/><rect x="0.5" y="0.5" width="14" height="2" fill="#2f51b8"/><rect x="3" y="4.2" width="9" height="1.2" fill="#3a9ee0"/><rect x="3" y="6.4" width="9" height="1.2" fill="#3a9ee0"/><rect x="3" y="8.6" width="9" height="1.2" fill="#3a9ee0"/><rect x="3" y="10.8" width="6.5" height="1.2" fill="#3a9ee0"/><path d="M9.3 16.4 L9.9 14.4 L15.2 9.1 L16.5 10.4 L11.2 15.7 Z" fill="#f7901e"/><path d="M15.2 9.1 L15.7 8.6 Q16.1 8.3 16.5 8.7 L16.8 9 Q17.1 9.4 16.8 9.8 L16.5 10.4Z" fill="#f06c6c"/><path d="M9.1 16.6 L9.5 15.3 L10.4 16.2 Z" fill="#333"/></svg></div>
<div class="A" style="left:378px;top:484px;line-height:0"><svg width="18" height="15" viewBox="0 0 18 15"><path d="M1.5 2.2 Q1.5 0.5 3 0.5 L6.5 0.5 Q7.5 0.5 8 1.5 L8.3 2 L16.5 2 Q17.5 2 17.5 3.5 L17.5 12.5 Q17.5 14 16 14 L3 14 Q1.5 14 1.5 12.5 Z" fill="#ffc61a"/><path d="M1.5 2.2 Q1.5 0.5 3 0.5 L6.5 0.5 Q7.5 0.5 8 1.5 L8.3 2.2Z" fill="#ffa000"/><path d="M0.3 7.8 H8.5" stroke="#2a3fc4" stroke-width="1.6"/><path d="M7 4.8 L11 7.8 L7 10.8 Z" fill="#2a3fc4"/></svg></div>
<div class="A" style="left:401px;top:482px;line-height:0"><svg width="16" height="18" viewBox="0 0 16 18"><path d="M0.2 0 H7.5 L10 2.5 V14 H0.2 Z" fill="#05a6f0"/><rect x="2.5" y="5.5" width="2" height="1" fill="#0277c8"/><rect x="2.5" y="8.5" width="2" height="1" fill="#0277c8"/><rect x="2.5" y="11" width="2" height="1" fill="#0277c8"/><path d="M5 4 H11.5 L15.7 8.2 V17.5 H5 Z" fill="#86cdf6"/><path d="M11.5 4 V8.2 H15.7Z" fill="#d4eefc"/><rect x="7" y="9.5" width="6" height="1" fill="#1e88d8"/><rect x="7" y="11.8" width="6" height="1" fill="#1e88d8"/><rect x="7" y="14.1" width="4" height="1" fill="#1e88d8"/></svg></div>
<div class="A" style="left:426px;top:483px;line-height:0"><svg width="13" height="16" viewBox="0 0 13 16"><path d="M4 2.2 Q4 0.3 6.5 0.3 Q9 0.3 9 2.2" stroke="#6a7bc8" stroke-width="1.3" fill="none"/><path d="M0.5 4.4 Q0.5 2.2 2.5 2.2 H10.5 Q12.5 2.2 12.5 4.4 Z" fill="#5668c0"/><path d="M1.3 4.6 H11.7 L11.2 14.6 Q11.1 15.7 10 15.7 H3 Q1.9 15.7 1.8 14.6 Z" fill="#9aa6dd"/><g fill="#6878c8"><rect x="3.3" y="5.5" width="1" height="9"/><rect x="6" y="5.5" width="1" height="9"/><rect x="8.7" y="5.5" width="1" height="9"/></g></svg></div>
<div class="A" style="left:465px;top:485px;line-height:0"><svg width="13" height="13" viewBox="0 0 13 13"><path d="M1.2 1.2 L11.8 11.8 M11.8 1.2 L1.2 11.8" stroke="#ff3535" stroke-width="2" stroke-linecap="round"/></svg></div>
<div class="A" style="left:485px;top:484px;font-size:11px;color:#23272f;letter-spacing:0.5px;line-height:13px">VBox_1_5</div>
<div class="A" style="left:620px;top:484px;font-size:11px;color:#23272f;letter-spacing:0.5px;line-height:13px">nagnis_master - Local site nagnis_master</div>
<div class="A" style="left:1083px;top:484px;font-size:11px;color:#23272f;letter-spacing:0.5px;line-height:13px">192.168.2.185</div>
<div class="A" style="left:1233px;top:486px;line-height:0"><svg width="20" height="10" viewBox="0 0 20 10"><circle cx="4.8" cy="5" r="4.3" fill="#ffa000"/><circle cx="3.1" cy="5" r="1.1" fill="#fff"/><path d="M8 3.3 H18.8 Q20 4.2 18.8 5.4 L18.2 6.3 L17.5 5.8 L16.8 6.6 L16 5.8 L15.2 6.6 L14.4 5.8 L13.6 6.6 L12.8 5.8 L12 6.6 L10.5 6.3 H8 Z" fill="#f29a00"/></svg></div>
<div class="A" style="left:1283px;top:464px;height:17px;background:#0aa5b5;border-radius:4px;color:#f4fbfc;font-size:11px;letter-spacing:0.5px;line-height:15px;padding:0 2.5px 0 4px">add_ip_addresses:add_ip_addresses_1</div>
<div class="A" style="left:1507px;top:464px;height:17px;background:#0aa5b5;border-radius:4px;color:#f4fbfc;font-size:11px;letter-spacing:0.5px;line-height:15px;padding:0 2.5px 0 4px">address_family:ip-v4-only</div>
<div class="A" style="left:1283px;top:485px;height:16px;background:#0aa5b5;border-radius:4px;color:#f4fbfc;font-size:11px;letter-spacing:0.5px;line-height:14px;padding:0 2.5px 0 4px">agent:cmk-agent</div>
<div class="A" style="left:1283px;top:504px;font-size:11px;color:#23272f;letter-spacing:0.5px;line-height:13px">... (show all)</div>
<div class="A" style="left:296px;top:524px;width:1596px;height:61px;background:#fff;border:1px solid #cdd0dc;border-radius:4px"></div>
<div class="A" style="left:309px;top:547px;line-height:0"><svg width="17" height="17" viewBox="0 0 17 17"><path d="M1.2 15.8 L2.2 12.6 L12.6 2.2 L14.8 4.4 L4.4 14.8 Z" fill="#2c9c45"/><path d="M12.6 2.2 L13.8 1 Q14.5 0.4 15.2 1 L16 1.8 Q16.6 2.5 16 3.2 L14.8 4.4 Z" fill="#f06c6c"/><path d="M12.1 2.7 L13 1.8 L15.2 4 L14.3 4.9Z" fill="#b0c8d0"/><path d="M1.2 15.8 L2.2 12.6 L4.4 14.8 Z" fill="#f2b33d"/><path d="M1 16 L1.5 14.5 L2.5 15.5 Z" fill="#333"/></svg></div>
<div class="A" style="left:333px;top:547px;line-height:0"><svg width="16" height="16" viewBox="0 0 16 16"><g stroke-width="1.6" stroke-linecap="round"><path d="M0.8 2 H5" stroke="#cfd8dc"/><path d="M5 2 H15" stroke="#ff6d00"/><path d="M0.8 7.8 H10" stroke="#cfd8dc"/><path d="M10 7.8 H15" stroke="#ff6d00"/><path d="M0.8 13.6 H3.5" stroke="#cfd8dc"/><path d="M3.5 13.6 H15" stroke="#ff6d00"/></g><ellipse cx="5.5" cy="2" rx="1.5" ry="2" fill="#cc3a0c"/><ellipse cx="10.9" cy="7.8" rx="1.5" ry="2" fill="#cc3a0c"/><ellipse cx="3.9" cy="13.6" rx="1.5" ry="2" fill="#cc3a0c"/></svg></div>
<div class="A" style="left:356px;top:547px;line-height:0"><svg width="17" height="17" viewBox="0 0 17 17"><rect x="0.5" y="0.5" width="14" height="14" fill="#c5e7fb"/><rect x="0.5" y="0.5" width="14" height="2" fill="#2f51b8"/><rect x="3" y="4.2" width="9" height="1.2" fill="#3a9ee0"/><rect x="3" y="6.4" width="9" height="1.2" fill="#3a9ee0"/><rect x="3" y="8.6" width="9" height="1.2" fill="#3a9ee0"/><rect x="3" y="10.8" width="6.5" height="1.2" fill="#3a9ee0"/><path d="M9.3 16.4 L9.9 14.4 L15.2 9.1 L16.5 10.4 L11.2 15.7 Z" fill="#f7901e"/><path d="M15.2 9.1 L15.7 8.6 Q16.1 8.3 16.5 8.7 L16.8 9 Q17.1 9.4 16.8 9.8 L16.5 10.4Z" fill="#f06c6c"/><path d="M9.1 16.6 L9.5 15.3 L10.4 16.2 Z" fill="#333"/></svg></div>
<div class="A" style="left:378px;top:548px;line-height:0"><svg width="18" height="15" viewBox="0 0 18 15"><path d="M1.5 2.2 Q1.5 0.5 3 0.5 L6.5 0.5 Q7.5 0.5 8 1.5 L8.3 2 L16.5 2 Q17.5 2 17.5 3.5 L17.5 12.5 Q17.5 14 16 14 L3 14 Q1.5 14 1.5 12.5 Z" fill="#ffc61a"/><path d="M1.5 2.2 Q1.5 0.5 3 0.5 L6.5 0.5 Q7.5 0.5 8 1.5 L8.3 2.2Z" fill="#ffa000"/><path d="M0.3 7.8 H8.5" stroke="#2a3fc4" stroke-width="1.6"/><path d="M7 4.8 L11 7.8 L7 10.8 Z" fill="#2a3fc4"/></svg></div>
<div class="A" style="left:401px;top:546px;line-height:0"><svg width="16" height="18" viewBox="0 0 16 18"><path d="M0.2 0 H7.5 L10 2.5 V14 H0.2 Z" fill="#05a6f0"/><rect x="2.5" y="5.5" width="2" height="1" fill="#0277c8"/><rect x="2.5" y="8.5" width="2" height="1" fill="#0277c8"/><rect x="2.5" y="11" width="2" height="1" fill="#0277c8"/><path d="M5 4 H11.5 L15.7 8.2 V17.5 H5 Z" fill="#86cdf6"/><path d="M11.5 4 V8.2 H15.7Z" fill="#d4eefc"/><rect x="7" y="9.5" width="6" height="1" fill="#1e88d8"/><rect x="7" y="11.8" width="6" height="1" fill="#1e88d8"/><rect x="7" y="14.1" width="4" height="1" fill="#1e88d8"/></svg></div>
<div class="A" style="left:426px;top:547px;line-height:0"><svg width="13" height="16" viewBox="0 0 13 16"><path d="M4 2.2 Q4 0.3 6.5 0.3 Q9 0.3 9 2.2" stroke="#6a7bc8" stroke-width="1.3" fill="none"/><path d="M0.5 4.4 Q0.5 2.2 2.5 2.2 H10.5 Q12.5 2.2 12.5 4.4 Z" fill="#5668c0"/><path d="M1.3 4.6 H11.7 L11.2 14.6 Q11.1 15.7 10 15.7 H3 Q1.9 15.7 1.8 14.6 Z" fill="#9aa6dd"/><g fill="#6878c8"><rect x="3.3" y="5.5" width="1" height="9"/><rect x="6" y="5.5" width="1" height="9"/><rect x="8.7" y="5.5" width="1" height="9"/></g></svg></div>
<div class="A" style="left:465px;top:549px;line-height:0"><svg width="13" height="13" viewBox="0 0 13 13"><path d="M1.2 1.2 L11.8 11.8 M11.8 1.2 L1.2 11.8" stroke="#ff3535" stroke-width="2" stroke-linecap="round"/></svg></div>
<div class="A" style="left:485px;top:547px;font-size:11px;color:#23272f;letter-spacing:0.5px;line-height:13px">Windows_SSH</div>
<div class="A" style="left:620px;top:547px;font-size:11px;color:#23272f;letter-spacing:0.5px;line-height:13px">nagnis_master - Local site nagnis_master</div>
<div class="A" style="left:1083px;top:547px;font-size:11px;color:#23272f;letter-spacing:0.5px;line-height:13px">192.168.2.128</div>
<div class="A" style="left:1233px;top:550px;line-height:0"><svg width="20" height="10" viewBox="0 0 20 10"><circle cx="4.8" cy="5" r="4.3" fill="#ffa000"/><circle cx="3.1" cy="5" r="1.1" fill="#fff"/><path d="M8 3.3 H18.8 Q20 4.2 18.8 5.4 L18.2 6.3 L17.5 5.8 L16.8 6.6 L16 5.8 L15.2 6.6 L14.4 5.8 L13.6 6.6 L12.8 5.8 L12 6.6 L10.5 6.3 H8 Z" fill="#f29a00"/></svg></div>
<div class="A" style="left:1283px;top:528px;height:17px;background:#0aa5b5;border-radius:4px;color:#f4fbfc;font-size:11px;letter-spacing:0.5px;line-height:15px;padding:0 2.5px 0 4px">add_ip_addresses:add_ip_addresses_1</div>
<div class="A" style="left:1507px;top:528px;height:17px;background:#0aa5b5;border-radius:4px;color:#f4fbfc;font-size:11px;letter-spacing:0.5px;line-height:15px;padding:0 2.5px 0 4px">address_family:ip-v4-only</div>
<div class="A" style="left:1283px;top:549px;height:16px;background:#0aa5b5;border-radius:4px;color:#f4fbfc;font-size:11px;letter-spacing:0.5px;line-height:14px;padding:0 2.5px 0 4px">agent:cmk-agent</div>
<div class="A" style="left:1283px;top:568px;font-size:11px;color:#23272f;letter-spacing:0.5px;line-height:13px">... (show all)</div>
<div class="A" style="left:296px;top:587px;width:1596px;height:61px;background:#fff;border:1px solid #cdd0dc;border-radius:4px"></div>
<div class="A" style="left:309px;top:610px;line-height:0"><svg width="17" height="17" viewBox="0 0 17 17"><path d="M1.2 15.8 L2.2 12.6 L12.6 2.2 L14.8 4.4 L4.4 14.8 Z" fill="#2c9c45"/><path d="M12.6 2.2 L13.8 1 Q14.5 0.4 15.2 1 L16 1.8 Q16.6 2.5 16 3.2 L14.8 4.4 Z" fill="#f06c6c"/><path d="M12.1 2.7 L13 1.8 L15.2 4 L14.3 4.9Z" fill="#b0c8d0"/><path d="M1.2 15.8 L2.2 12.6 L4.4 14.8 Z" fill="#f2b33d"/><path d="M1 16 L1.5 14.5 L2.5 15.5 Z" fill="#333"/></svg></div>
<div class="A" style="left:333px;top:610px;line-height:0"><svg width="16" height="16" viewBox="0 0 16 16"><g stroke-width="1.6" stroke-linecap="round"><path d="M0.8 2 H5" stroke="#cfd8dc"/><path d="M5 2 H15" stroke="#ff6d00"/><path d="M0.8 7.8 H10" stroke="#cfd8dc"/><path d="M10 7.8 H15" stroke="#ff6d00"/><path d="M0.8 13.6 H3.5" stroke="#cfd8dc"/><path d="M3.5 13.6 H15" stroke="#ff6d00"/></g><ellipse cx="5.5" cy="2" rx="1.5" ry="2" fill="#cc3a0c"/><ellipse cx="10.9" cy="7.8" rx="1.5" ry="2" fill="#cc3a0c"/><ellipse cx="3.9" cy="13.6" rx="1.5" ry="2" fill="#cc3a0c"/></svg></div>
<div class="A" style="left:356px;top:610px;line-height:0"><svg width="17" height="17" viewBox="0 0 17 17"><rect x="0.5" y="0.5" width="14" height="14" fill="#c5e7fb"/><rect x="0.5" y="0.5" width="14" height="2" fill="#2f51b8"/><rect x="3" y="4.2" width="9" height="1.2" fill="#3a9ee0"/><rect x="3" y="6.4" width="9" height="1.2" fill="#3a9ee0"/><rect x="3" y="8.6" width="9" height="1.2" fill="#3a9ee0"/><rect x="3" y="10.8" width="6.5" height="1.2" fill="#3a9ee0"/><path d="M9.3 16.4 L9.9 14.4 L15.2 9.1 L16.5 10.4 L11.2 15.7 Z" fill="#f7901e"/><path d="M15.2 9.1 L15.7 8.6 Q16.1 8.3 16.5 8.7 L16.8 9 Q17.1 9.4 16.8 9.8 L16.5 10.4Z" fill="#f06c6c"/><path d="M9.1 16.6 L9.5 15.3 L10.4 16.2 Z" fill="#333"/></svg></div>
<div class="A" style="left:378px;top:611px;line-height:0"><svg width="18" height="15" viewBox="0 0 18 15"><path d="M1.5 2.2 Q1.5 0.5 3 0.5 L6.5 0.5 Q7.5 0.5 8 1.5 L8.3 2 L16.5 2 Q17.5 2 17.5 3.5 L17.5 12.5 Q17.5 14 16 14 L3 14 Q1.5 14 1.5 12.5 Z" fill="#ffc61a"/><path d="M1.5 2.2 Q1.5 0.5 3 0.5 L6.5 0.5 Q7.5 0.5 8 1.5 L8.3 2.2Z" fill="#ffa000"/><path d="M0.3 7.8 H8.5" stroke="#2a3fc4" stroke-width="1.6"/><path d="M7 4.8 L11 7.8 L7 10.8 Z" fill="#2a3fc4"/></svg></div>
<div class="A" style="left:401px;top:609px;line-height:0"><svg width="16" height="18" viewBox="0 0 16 18"><path d="M0.2 0 H7.5 L10 2.5 V14 H0.2 Z" fill="#05a6f0"/><rect x="2.5" y="5.5" width="2" height="1" fill="#0277c8"/><rect x="2.5" y="8.5" width="2" height="1" fill="#0277c8"/><rect x="2.5" y="11" width="2" height="1" fill="#0277c8"/><path d="M5 4 H11.5 L15.7 8.2 V17.5 H5 Z" fill="#86cdf6"/><path d="M11.5 4 V8.2 H15.7Z" fill="#d4eefc"/><rect x="7" y="9.5" width="6" height="1" fill="#1e88d8"/><rect x="7" y="11.8" width="6" height="1" fill="#1e88d8"/><rect x="7" y="14.1" width="4" height="1" fill="#1e88d8"/></svg></div>
<div class="A" style="left:426px;top:610px;line-height:0"><svg width="13" height="16" viewBox="0 0 13 16"><path d="M4 2.2 Q4 0.3 6.5 0.3 Q9 0.3 9 2.2" stroke="#6a7bc8" stroke-width="1.3" fill="none"/><path d="M0.5 4.4 Q0.5 2.2 2.5 2.2 H10.5 Q12.5 2.2 12.5 4.4 Z" fill="#5668c0"/><path d="M1.3 4.6 H11.7 L11.2 14.6 Q11.1 15.7 10 15.7 H3 Q1.9 15.7 1.8 14.6 Z" fill="#9aa6dd"/><g fill="#6878c8"><rect x="3.3" y="5.5" width="1" height="9"/><rect x="6" y="5.5" width="1" height="9"/><rect x="8.7" y="5.5" width="1" height="9"/></g></svg></div>
<div class="A" style="left:461px;top:611px;font-size:11px;color:#23272f;letter-spacing:0.5px;line-height:13px">Windows_Server</div>
<div class="A" style="left:620px;top:611px;font-size:11px;color:#23272f;letter-spacing:0.5px;line-height:13px">nagnis_master - Local site nagnis_master</div>
<div class="A" style="left:1083px;top:611px;font-size:11px;color:#23272f;letter-spacing:0.5px;line-height:13px">192.168.2.123</div>
<div class="A" style="left:1233px;top:613px;line-height:0"><svg width="20" height="10" viewBox="0 0 20 10"><circle cx="4.8" cy="5" r="4.3" fill="#ffa000"/><circle cx="3.1" cy="5" r="1.1" fill="#fff"/><path d="M8 3.3 H18.8 Q20 4.2 18.8 5.4 L18.2 6.3 L17.5 5.8 L16.8 6.6 L16 5.8 L15.2 6.6 L14.4 5.8 L13.6 6.6 L12.8 5.8 L12 6.6 L10.5 6.3 H8 Z" fill="#f29a00"/></svg></div>
<div class="A" style="left:1283px;top:591px;height:17px;background:#0aa5b5;border-radius:4px;color:#f4fbfc;font-size:11px;letter-spacing:0.5px;line-height:15px;padding:0 2.5px 0 4px">add_ip_addresses:add_ip_addresses_1</div>
<div class="A" style="left:1507px;top:591px;height:17px;background:#0aa5b5;border-radius:4px;color:#f4fbfc;font-size:11px;letter-spacing:0.5px;line-height:15px;padding:0 2.5px 0 4px">address_family:ip-v4-only</div>
<div class="A" style="left:1283px;top:612px;height:16px;background:#0aa5b5;border-radius:4px;color:#f4fbfc;font-size:11px;letter-spacing:0.5px;line-height:14px;padding:0 2.5px 0 4px">agent:cmk-agent</div>
<div class="A" style="left:1283px;top:631px;font-size:11px;color:#23272f;letter-spacing:0.5px;line-height:13px">... (show all)</div>
<div class="A" style="left:296px;top:650px;width:1596px;height:62px;background:#fff;border:1px solid #cdd0dc;border-radius:4px"></div>
<div class="A" style="left:309px;top:673px;line-height:0"><svg width="17" height="17" viewBox="0 0 17 17"><path d="M1.2 15.8 L2.2 12.6 L12.6 2.2 L14.8 4.4 L4.4 14.8 Z" fill="#2c9c45"/><path d="M12.6 2.2 L13.8 1 Q14.5 0.4 15.2 1 L16 1.8 Q16.6 2.5 16 3.2 L14.8 4.4 Z" fill="#f06c6c"/><path d="M12.1 2.7 L13 1.8 L15.2 4 L14.3 4.9Z" fill="#b0c8d0"/><path d="M1.2 15.8 L2.2 12.6 L4.4 14.8 Z" fill="#f2b33d"/><path d="M1 16 L1.5 14.5 L2.5 15.5 Z" fill="#333"/></svg></div>
<div class="A" style="left:333px;top:673px;line-height:0"><svg width="16" height="16" viewBox="0 0 16 16"><g stroke-width="1.6" stroke-linecap="round"><path d="M0.8 2 H5" stroke="#cfd8dc"/><path d="M5 2 H15" stroke="#ff6d00"/><path d="M0.8 7.8 H10" stroke="#cfd8dc"/><path d="M10 7.8 H15" stroke="#ff6d00"/><path d="M0.8 13.6 H3.5" stroke="#cfd8dc"/><path d="M3.5 13.6 H15" stroke="#ff6d00"/></g><ellipse cx="5.5" cy="2" rx="1.5" ry="2" fill="#cc3a0c"/><ellipse cx="10.9" cy="7.8" rx="1.5" ry="2" fill="#cc3a0c"/><ellipse cx="3.9" cy="13.6" rx="1.5" ry="2" fill="#cc3a0c"/></svg></div>
<div class="A" style="left:356px;top:673px;line-height:0"><svg width="17" height="17" viewBox="0 0 17 17"><rect x="0.5" y="0.5" width="14" height="14" fill="#c5e7fb"/><rect x="0.5" y="0.5" width="14" height="2" fill="#2f51b8"/><rect x="3" y="4.2" width="9" height="1.2" fill="#3a9ee0"/><rect x="3" y="6.4" width="9" height="1.2" fill="#3a9ee0"/><rect x="3" y="8.6" width="9" height="1.2" fill="#3a9ee0"/><rect x="3" y="10.8" width="6.5" height="1.2" fill="#3a9ee0"/><path d="M9.3 16.4 L9.9 14.4 L15.2 9.1 L16.5 10.4 L11.2 15.7 Z" fill="#f7901e"/><path d="M15.2 9.1 L15.7 8.6 Q16.1 8.3 16.5 8.7 L16.8 9 Q17.1 9.4 16.8 9.8 L16.5 10.4Z" fill="#f06c6c"/><path d="M9.1 16.6 L9.5 15.3 L10.4 16.2 Z" fill="#333"/></svg></div>
<div class="A" style="left:378px;top:674px;line-height:0"><svg width="18" height="15" viewBox="0 0 18 15"><path d="M1.5 2.2 Q1.5 0.5 3 0.5 L6.5 0.5 Q7.5 0.5 8 1.5 L8.3 2 L16.5 2 Q17.5 2 17.5 3.5 L17.5 12.5 Q17.5 14 16 14 L3 14 Q1.5 14 1.5 12.5 Z" fill="#ffc61a"/><path d="M1.5 2.2 Q1.5 0.5 3 0.5 L6.5 0.5 Q7.5 0.5 8 1.5 L8.3 2.2Z" fill="#ffa000"/><path d="M0.3 7.8 H8.5" stroke="#2a3fc4" stroke-width="1.6"/><path d="M7 4.8 L11 7.8 L7 10.8 Z" fill="#2a3fc4"/></svg></div>
<div class="A" style="left:401px;top:672px;line-height:0"><svg width="16" height="18" viewBox="0 0 16 18"><path d="M0.2 0 H7.5 L10 2.5 V14 H0.2 Z" fill="#05a6f0"/><rect x="2.5" y="5.5" width="2" height="1" fill="#0277c8"/><rect x="2.5" y="8.5" width="2" height="1" fill="#0277c8"/><rect x="2.5" y="11" width="2" height="1" fill="#0277c8"/><path d="M5 4 H11.5 L15.7 8.2 V17.5 H5 Z" fill="#86cdf6"/><path d="M11.5 4 V8.2 H15.7Z" fill="#d4eefc"/><rect x="7" y="9.5" width="6" height="1" fill="#1e88d8"/><rect x="7" y="11.8" width="6" height="1" fill="#1e88d8"/><rect x="7" y="14.1" width="4" height="1" fill="#1e88d8"/></svg></div>
<div class="A" style="left:426px;top:673px;line-height:0"><svg width="13" height="16" viewBox="0 0 13 16"><path d="M4 2.2 Q4 0.3 6.5 0.3 Q9 0.3 9 2.2" stroke="#6a7bc8" stroke-width="1.3" fill="none"/><path d="M0.5 4.4 Q0.5 2.2 2.5 2.2 H10.5 Q12.5 2.2 12.5 4.4 Z" fill="#5668c0"/><path d="M1.3 4.6 H11.7 L11.2 14.6 Q11.1 15.7 10 15.7 H3 Q1.9 15.7 1.8 14.6 Z" fill="#9aa6dd"/><g fill="#6878c8"><rect x="3.3" y="5.5" width="1" height="9"/><rect x="6" y="5.5" width="1" height="9"/><rect x="8.7" y="5.5" width="1" height="9"/></g></svg></div>
<div class="A" style="left:461px;top:674px;font-size:11px;color:#23272f;letter-spacing:0.5px;line-height:13px">localhost</div>
<div class="A" style="left:620px;top:674px;font-size:11px;color:#23272f;letter-spacing:0.5px;line-height:13px">nagnis_master - Local site nagnis_master</div>
<div class="A" style="left:942px;top:674px;font-size:11px;color:#23272f;letter-spacing:0.5px;line-height:13px">test</div>
<div class="A" style="left:1083px;top:674px;font-size:11px;color:#23272f;letter-spacing:0.5px;line-height:13px">127.0.0.1</div>
<div class="A" style="left:1233px;top:676px;line-height:0"><svg width="20" height="10" viewBox="0 0 20 10"><circle cx="4.8" cy="5" r="4.3" fill="#ffa000"/><circle cx="3.1" cy="5" r="1.1" fill="#fff"/><path d="M8 3.3 H18.8 Q20 4.2 18.8 5.4 L18.2 6.3 L17.5 5.8 L16.8 6.6 L16 5.8 L15.2 6.6 L14.4 5.8 L13.6 6.6 L12.8 5.8 L12 6.6 L10.5 6.3 H8 Z" fill="#f29a00"/></svg></div>
<div class="A" style="left:1283px;top:654px;height:17px;background:#0aa5b5;border-radius:4px;color:#f4fbfc;font-size:11px;letter-spacing:0.5px;line-height:15px;padding:0 2.5px 0 4px">add_ip_addresses:add_ip_addresses_1</div>
<div class="A" style="left:1507px;top:654px;height:17px;background:#0aa5b5;border-radius:4px;color:#f4fbfc;font-size:11px;letter-spacing:0.5px;line-height:15px;padding:0 2.5px 0 4px">address_family:ip-v4-only</div>
<div class="A" style="left:1283px;top:675px;height:16px;background:#0aa5b5;border-radius:4px;color:#f4fbfc;font-size:11px;letter-spacing:0.5px;line-height:14px;padding:0 2.5px 0 4px">agent:cmk-agent</div>
<div class="A" style="left:1283px;top:694px;font-size:11px;color:#23272f;letter-spacing:0.5px;line-height:13px">... (show all)</div>
<div class="A" style="left:296px;top:714px;width:1596px;height:61px;background:#fff;border:1px solid #cdd0dc;border-radius:4px"></div>
<div class="A" style="left:309px;top:737px;line-height:0"><svg width="17" height="17" viewBox="0 0 17 17"><path d="M1.2 15.8 L2.2 12.6 L12.6 2.2 L14.8 4.4 L4.4 14.8 Z" fill="#2c9c45"/><path d="M12.6 2.2 L13.8 1 Q14.5 0.4 15.2 1 L16 1.8 Q16.6 2.5 16 3.2 L14.8 4.4 Z" fill="#f06c6c"/><path d="M12.1 2.7 L13 1.8 L15.2 4 L14.3 4.9Z" fill="#b0c8d0"/><path d="M1.2 15.8 L2.2 12.6 L4.4 14.8 Z" fill="#f2b33d"/><path d="M1 16 L1.5 14.5 L2.5 15.5 Z" fill="#333"/></svg></div>
<div class="A" style="left:333px;top:737px;line-height:0"><svg width="16" height="16" viewBox="0 0 16 16"><g stroke-width="1.6" stroke-linecap="round"><path d="M0.8 2 H5" stroke="#cfd8dc"/><path d="M5 2 H15" stroke="#ff6d00"/><path d="M0.8 7.8 H10" stroke="#cfd8dc"/><path d="M10 7.8 H15" stroke="#ff6d00"/><path d="M0.8 13.6 H3.5" stroke="#cfd8dc"/><path d="M3.5 13.6 H15" stroke="#ff6d00"/></g><ellipse cx="5.5" cy="2" rx="1.5" ry="2" fill="#cc3a0c"/><ellipse cx="10.9" cy="7.8" rx="1.5" ry="2" fill="#cc3a0c"/><ellipse cx="3.9" cy="13.6" rx="1.5" ry="2" fill="#cc3a0c"/></svg></div>
<div class="A" style="left:356px;top:737px;line-height:0"><svg width="17" height="17" viewBox="0 0 17 17"><rect x="0.5" y="0.5" width="14" height="14" fill="#c5e7fb"/><rect x="0.5" y="0.5" width="14" height="2" fill="#2f51b8"/><rect x="3" y="4.2" width="9" height="1.2" fill="#3a9ee0"/><rect x="3" y="6.4" width="9" height="1.2" fill="#3a9ee0"/><rect x="3" y="8.6" width="9" height="1.2" fill="#3a9ee0"/><rect x="3" y="10.8" width="6.5" height="1.2" fill="#3a9ee0"/><path d="M9.3 16.4 L9.9 14.4 L15.2 9.1 L16.5 10.4 L11.2 15.7 Z" fill="#f7901e"/><path d="M15.2 9.1 L15.7 8.6 Q16.1 8.3 16.5 8.7 L16.8 9 Q17.1 9.4 16.8 9.8 L16.5 10.4Z" fill="#f06c6c"/><path d="M9.1 16.6 L9.5 15.3 L10.4 16.2 Z" fill="#333"/></svg></div>
<div class="A" style="left:378px;top:738px;line-height:0"><svg width="18" height="15" viewBox="0 0 18 15"><path d="M1.5 2.2 Q1.5 0.5 3 0.5 L6.5 0.5 Q7.5 0.5 8 1.5 L8.3 2 L16.5 2 Q17.5 2 17.5 3.5 L17.5 12.5 Q17.5 14 16 14 L3 14 Q1.5 14 1.5 12.5 Z" fill="#ffc61a"/><path d="M1.5 2.2 Q1.5 0.5 3 0.5 L6.5 0.5 Q7.5 0.5 8 1.5 L8.3 2.2Z" fill="#ffa000"/><path d="M0.3 7.8 H8.5" stroke="#2a3fc4" stroke-width="1.6"/><path d="M7 4.8 L11 7.8 L7 10.8 Z" fill="#2a3fc4"/></svg></div>
<div class="A" style="left:401px;top:736px;line-height:0"><svg width="16" height="18" viewBox="0 0 16 18"><path d="M0.2 0 H7.5 L10 2.5 V14 H0.2 Z" fill="#05a6f0"/><rect x="2.5" y="5.5" width="2" height="1" fill="#0277c8"/><rect x="2.5" y="8.5" width="2" height="1" fill="#0277c8"/><rect x="2.5" y="11" width="2" height="1" fill="#0277c8"/><path d="M5 4 H11.5 L15.7 8.2 V17.5 H5 Z" fill="#86cdf6"/><path d="M11.5 4 V8.2 H15.7Z" fill="#d4eefc"/><rect x="7" y="9.5" width="6" height="1" fill="#1e88d8"/><rect x="7" y="11.8" width="6" height="1" fill="#1e88d8"/><rect x="7" y="14.1" width="4" height="1" fill="#1e88d8"/></svg></div>
<div class="A" style="left:426px;top:737px;line-height:0"><svg width="13" height="16" viewBox="0 0 13 16"><path d="M4 2.2 Q4 0.3 6.5 0.3 Q9 0.3 9 2.2" stroke="#6a7bc8" stroke-width="1.3" fill="none"/><path d="M0.5 4.4 Q0.5 2.2 2.5 2.2 H10.5 Q12.5 2.2 12.5 4.4 Z" fill="#5668c0"/><path d="M1.3 4.6 H11.7 L11.2 14.6 Q11.1 15.7 10 15.7 H3 Q1.9 15.7 1.8 14.6 Z" fill="#9aa6dd"/><g fill="#6878c8"><rect x="3.3" y="5.5" width="1" height="9"/><rect x="6" y="5.5" width="1" height="9"/><rect x="8.7" y="5.5" width="1" height="9"/></g></svg></div>
<div class="A" style="left:461px;top:737px;font-size:11px;color:#23272f;letter-spacing:0.5px;line-height:13px">localhost2</div>
<div class="A" style="left:620px;top:737px;font-size:11px;color:#23272f;letter-spacing:0.5px;line-height:13px">nagnis_master - Local site nagnis_master</div>
<div class="A" style="left:942px;top:737px;font-size:11px;color:#23272f;letter-spacing:0.5px;line-height:13px">test</div>
<div class="A" style="left:1083px;top:737px;font-size:11px;color:#23272f;letter-spacing:0.5px;line-height:13px">127.0.0.1</div>
<div class="A" style="left:1233px;top:740px;line-height:0"><svg width="20" height="10" viewBox="0 0 20 10"><circle cx="4.8" cy="5" r="4.3" fill="#ffa000"/><circle cx="3.1" cy="5" r="1.1" fill="#fff"/><path d="M8 3.3 H18.8 Q20 4.2 18.8 5.4 L18.2 6.3 L17.5 5.8 L16.8 6.6 L16 5.8 L15.2 6.6 L14.4 5.8 L13.6 6.6 L12.8 5.8 L12 6.6 L10.5 6.3 H8 Z" fill="#f29a00"/></svg></div>
<div class="A" style="left:1283px;top:718px;height:17px;background:#0aa5b5;border-radius:4px;color:#f4fbfc;font-size:11px;letter-spacing:0.5px;line-height:15px;padding:0 2.5px 0 4px">add_ip_addresses:add_ip_addresses_1</div>
<div class="A" style="left:1507px;top:718px;height:17px;background:#0aa5b5;border-radius:4px;color:#f4fbfc;font-size:11px;letter-spacing:0.5px;line-height:15px;padding:0 2.5px 0 4px">address_family:ip-v4-only</div>
<div class="A" style="left:1283px;top:739px;height:16px;background:#0aa5b5;border-radius:4px;color:#f4fbfc;font-size:11px;letter-spacing:0.5px;line-height:14px;padding:0 2.5px 0 4px">agent:cmk-agent</div>
<div class="A" style="left:1283px;top:758px;font-size:11px;color:#23272f;letter-spacing:0.5px;line-height:13px">... (show all)</div>
<div class="A" style="left:296px;top:777px;width:1596px;height:61px;background:#fff;border:1px solid #cdd0dc;border-radius:4px"></div>
<div class="A" style="left:309px;top:800px;line-height:0"><svg width="17" height="17" viewBox="0 0 17 17"><path d="M1.2 15.8 L2.2 12.6 L12.6 2.2 L14.8 4.4 L4.4 14.8 Z" fill="#2c9c45"/><path d="M12.6 2.2 L13.8 1 Q14.5 0.4 15.2 1 L16 1.8 Q16.6 2.5 16 3.2 L14.8 4.4 Z" fill="#f06c6c"/><path d="M12.1 2.7 L13 1.8 L15.2 4 L14.3 4.9Z" fill="#b0c8d0"/><path d="M1.2 15.8 L2.2 12.6 L4.4 14.8 Z" fill="#f2b33d"/><path d="M1 16 L1.5 14.5 L2.5 15.5 Z" fill="#333"/></svg></div>
<div class="A" style="left:333px;top:800px;line-height:0"><svg width="16" height="16" viewBox="0 0 16 16"><g stroke-width="1.6" stroke-linecap="round"><path d="M0.8 2 H5" stroke="#cfd8dc"/><path d="M5 2 H15" stroke="#ff6d00"/><path d="M0.8 7.8 H10" stroke="#cfd8dc"/><path d="M10 7.8 H15" stroke="#ff6d00"/><path d="M0.8 13.6 H3.5" stroke="#cfd8dc"/><path d="M3.5 13.6 H15" stroke="#ff6d00"/></g><ellipse cx="5.5" cy="2" rx="1.5" ry="2" fill="#cc3a0c"/><ellipse cx="10.9" cy="7.8" rx="1.5" ry="2" fill="#cc3a0c"/><ellipse cx="3.9" cy="13.6" rx="1.5" ry="2" fill="#cc3a0c"/></svg></div>
<div class="A" style="left:356px;top:800px;line-height:0"><svg width="17" height="17" viewBox="0 0 17 17"><rect x="0.5" y="0.5" width="14" height="14" fill="#c5e7fb"/><rect x="0.5" y="0.5" width="14" height="2" fill="#2f51b8"/><rect x="3" y="4.2" width="9" height="1.2" fill="#3a9ee0"/><rect x="3" y="6.4" width="9" height="1.2" fill="#3a9ee0"/><rect x="3" y="8.6" width="9" height="1.2" fill="#3a9ee0"/><rect x="3" y="10.8" width="6.5" height="1.2" fill="#3a9ee0"/><path d="M9.3 16.4 L9.9 14.4 L15.2 9.1 L16.5 10.4 L11.2 15.7 Z" fill="#f7901e"/><path d="M15.2 9.1 L15.7 8.6 Q16.1 8.3 16.5 8.7 L16.8 9 Q17.1 9.4 16.8 9.8 L16.5 10.4Z" fill="#f06c6c"/><path d="M9.1 16.6 L9.5 15.3 L10.4 16.2 Z" fill="#333"/></svg></div>
<div class="A" style="left:378px;top:801px;line-height:0"><svg width="18" height="15" viewBox="0 0 18 15"><path d="M1.5 2.2 Q1.5 0.5 3 0.5 L6.5 0.5 Q7.5 0.5 8 1.5 L8.3 2 L16.5 2 Q17.5 2 17.5 3.5 L17.5 12.5 Q17.5 14 16 14 L3 14 Q1.5 14 1.5 12.5 Z" fill="#ffc61a"/><path d="M1.5 2.2 Q1.5 0.5 3 0.5 L6.5 0.5 Q7.5 0.5 8 1.5 L8.3 2.2Z" fill="#ffa000"/><path d="M0.3 7.8 H8.5" stroke="#2a3fc4" stroke-width="1.6"/><path d="M7 4.8 L11 7.8 L7 10.8 Z" fill="#2a3fc4"/></svg></div>
<div class="A" style="left:401px;top:799px;line-height:0"><svg width="16" height="18" viewBox="0 0 16 18"><path d="M0.2 0 H7.5 L10 2.5 V14 H0.2 Z" fill="#05a6f0"/><rect x="2.5" y="5.5" width="2" height="1" fill="#0277c8"/><rect x="2.5" y="8.5" width="2" height="1" fill="#0277c8"/><rect x="2.5" y="11" width="2" height="1" fill="#0277c8"/><path d="M5 4 H11.5 L15.7 8.2 V17.5 H5 Z" fill="#86cdf6"/><path d="M11.5 4 V8.2 H15.7Z" fill="#d4eefc"/><rect x="7" y="9.5" width="6" height="1" fill="#1e88d8"/><rect x="7" y="11.8" width="6" height="1" fill="#1e88d8"/><rect x="7" y="14.1" width="4" height="1" fill="#1e88d8"/></svg></div>
<div class="A" style="left:426px;top:800px;line-height:0"><svg width="13" height="16" viewBox="0 0 13 16"><path d="M4 2.2 Q4 0.3 6.5 0.3 Q9 0.3 9 2.2" stroke="#6a7bc8" stroke-width="1.3" fill="none"/><path d="M0.5 4.4 Q0.5 2.2 2.5 2.2 H10.5 Q12.5 2.2 12.5 4.4 Z" fill="#5668c0"/><path d="M1.3 4.6 H11.7 L11.2 14.6 Q11.1 15.7 10 15.7 H3 Q1.9 15.7 1.8 14.6 Z" fill="#9aa6dd"/><g fill="#6878c8"><rect x="3.3" y="5.5" width="1" height="9"/><rect x="6" y="5.5" width="1" height="9"/><rect x="8.7" y="5.5" width="1" height="9"/></g></svg></div>
<div class="A" style="left:461px;top:800px;font-size:11px;color:#23272f;letter-spacing:0.5px;line-height:13px">localhost3</div>
<div class="A" style="left:620px;top:800px;font-size:11px;color:#23272f;letter-spacing:0.5px;line-height:13px">nagnis_master - Local site nagnis_master</div>
<div class="A" style="left:942px;top:800px;font-size:11px;color:#23272f;letter-spacing:0.5px;line-height:13px">test</div>
<div class="A" style="left:1083px;top:800px;font-size:11px;color:#23272f;letter-spacing:0.5px;line-height:13px">127.0.0.1</div>
<div class="A" style="left:1233px;top:803px;line-height:0"><svg width="20" height="10" viewBox="0 0 20 10"><circle cx="4.8" cy="5" r="4.3" fill="#ffa000"/><circle cx="3.1" cy="5" r="1.1" fill="#fff"/><path d="M8 3.3 H18.8 Q20 4.2 18.8 5.4 L18.2 6.3 L17.5 5.8 L16.8 6.6 L16 5.8 L15.2 6.6 L14.4 5.8 L13.6 6.6 L12.8 5.8 L12 6.6 L10.5 6.3 H8 Z" fill="#f29a00"/></svg></div>
<div class="A" style="left:1283px;top:781px;height:17px;background:#0aa5b5;border-radius:4px;color:#f4fbfc;font-size:11px;letter-spacing:0.5px;line-height:15px;padding:0 2.5px 0 4px">add_ip_addresses:add_ip_addresses_1</div>
<div class="A" style="left:1507px;top:781px;height:17px;background:#0aa5b5;border-radius:4px;color:#f4fbfc;font-size:11px;letter-spacing:0.5px;line-height:15px;padding:0 2.5px 0 4px">address_family:ip-v4-only</div>
<div class="A" style="left:1283px;top:802px;height:16px;background:#0aa5b5;border-radius:4px;color:#f4fbfc;font-size:11px;letter-spacing:0.5px;line-height:14px;padding:0 2.5px 0 4px">agent:cmk-agent</div>
<div class="A" style="left:1283px;top:821px;font-size:11px;color:#23272f;letter-spacing:0.5px;line-height:13px">... (show all)</div>
<div class="A" style="left:296px;top:840px;width:1596px;height:61px;background:#fff;border:1px solid #cdd0dc;border-radius:4px"></div>
<div class="A" style="left:309px;top:863px;line-height:0"><svg width="17" height="17" viewBox="0 0 17 17"><path d="M1.2 15.8 L2.2 12.6 L12.6 2.2 L14.8 4.4 L4.4 14.8 Z" fill="#2c9c45"/><path d="M12.6 2.2 L13.8 1 Q14.5 0.4 15.2 1 L16 1.8 Q16.6 2.5 16 3.2 L14.8 4.4 Z" fill="#f06c6c"/><path d="M12.1 2.7 L13 1.8 L15.2 4 L14.3 4.9Z" fill="#b0c8d0"/><path d="M1.2 15.8 L2.2 12.6 L4.4 14.8 Z" fill="#f2b33d"/><path d="M1 16 L1.5 14.5 L2.5 15.5 Z" fill="#333"/></svg></div>
<div class="A" style="left:333px;top:863px;line-height:0"><svg width="16" height="16" viewBox="0 0 16 16"><g stroke-width="1.6" stroke-linecap="round"><path d="M0.8 2 H5" stroke="#cfd8dc"/><path d="M5 2 H15" stroke="#ff6d00"/><path d="M0.8 7.8 H10" stroke="#cfd8dc"/><path d="M10 7.8 H15" stroke="#ff6d00"/><path d="M0.8 13.6 H3.5" stroke="#cfd8dc"/><path d="M3.5 13.6 H15" stroke="#ff6d00"/></g><ellipse cx="5.5" cy="2" rx="1.5" ry="2" fill="#cc3a0c"/><ellipse cx="10.9" cy="7.8" rx="1.5" ry="2" fill="#cc3a0c"/><ellipse cx="3.9" cy="13.6" rx="1.5" ry="2" fill="#cc3a0c"/></svg></div>
<div class="A" style="left:356px;top:863px;line-height:0"><svg width="17" height="17" viewBox="0 0 17 17"><rect x="0.5" y="0.5" width="14" height="14" fill="#c5e7fb"/><rect x="0.5" y="0.5" width="14" height="2" fill="#2f51b8"/><rect x="3" y="4.2" width="9" height="1.2" fill="#3a9ee0"/><rect x="3" y="6.4" width="9" height="1.2" fill="#3a9ee0"/><rect x="3" y="8.6" width="9" height="1.2" fill="#3a9ee0"/><rect x="3" y="10.8" width="6.5" height="1.2" fill="#3a9ee0"/><path d="M9.3 16.4 L9.9 14.4 L15.2 9.1 L16.5 10.4 L11.2 15.7 Z" fill="#f7901e"/><path d="M15.2 9.1 L15.7 8.6 Q16.1 8.3 16.5 8.7 L16.8 9 Q17.1 9.4 16.8 9.8 L16.5 10.4Z" fill="#f06c6c"/><path d="M9.1 16.6 L9.5 15.3 L10.4 16.2 Z" fill="#333"/></svg></div>
<div class="A" style="left:378px;top:864px;line-height:0"><svg width="18" height="15" viewBox="0 0 18 15"><path d="M1.5 2.2 Q1.5 0.5 3 0.5 L6.5 0.5 Q7.5 0.5 8 1.5 L8.3 2 L16.5 2 Q17.5 2 17.5 3.5 L17.5 12.5 Q17.5 14 16 14 L3 14 Q1.5 14 1.5 12.5 Z" fill="#ffc61a"/><path d="M1.5 2.2 Q1.5 0.5 3 0.5 L6.5 0.5 Q7.5 0.5 8 1.5 L8.3 2.2Z" fill="#ffa000"/><path d="M0.3 7.8 H8.5" stroke="#2a3fc4" stroke-width="1.6"/><path d="M7 4.8 L11 7.8 L7 10.8 Z" fill="#2a3fc4"/></svg></div>
<div class="A" style="left:401px;top:862px;line-height:0"><svg width="16" height="18" viewBox="0 0 16 18"><path d="M0.2 0 H7.5 L10 2.5 V14 H0.2 Z" fill="#05a6f0"/><rect x="2.5" y="5.5" width="2" height="1" fill="#0277c8"/><rect x="2.5" y="8.5" width="2" height="1" fill="#0277c8"/><rect x="2.5" y="11" width="2" height="1" fill="#0277c8"/><path d="M5 4 H11.5 L15.7 8.2 V17.5 H5 Z" fill="#86cdf6"/><path d="M11.5 4 V8.2 H15.7Z" fill="#d4eefc"/><rect x="7" y="9.5" width="6" height="1" fill="#1e88d8"/><rect x="7" y="11.8" width="6" height="1" fill="#1e88d8"/><rect x="7" y="14.1" width="4" height="1" fill="#1e88d8"/></svg></div>
<div class="A" style="left:426px;top:863px;line-height:0"><svg width="13" height="16" viewBox="0 0 13 16"><path d="M4 2.2 Q4 0.3 6.5 0.3 Q9 0.3 9 2.2" stroke="#6a7bc8" stroke-width="1.3" fill="none"/><path d="M0.5 4.4 Q0.5 2.2 2.5 2.2 H10.5 Q12.5 2.2 12.5 4.4 Z" fill="#5668c0"/><path d="M1.3 4.6 H11.7 L11.2 14.6 Q11.1 15.7 10 15.7 H3 Q1.9 15.7 1.8 14.6 Z" fill="#9aa6dd"/><g fill="#6878c8"><rect x="3.3" y="5.5" width="1" height="9"/><rect x="6" y="5.5" width="1" height="9"/><rect x="8.7" y="5.5" width="1" height="9"/></g></svg></div>
<div class="A" style="left:465px;top:865px;line-height:0"><svg width="13" height="13" viewBox="0 0 13 13"><path d="M1.2 1.2 L11.8 11.8 M11.8 1.2 L1.2 11.8" stroke="#ff3535" stroke-width="2" stroke-linecap="round"/></svg></div>
<div class="A" style="left:485px;top:864px;font-size:11px;color:#23272f;letter-spacing:0.5px;line-height:13px">vcenter</div>
<div class="A" style="left:620px;top:864px;font-size:11px;color:#23272f;letter-spacing:0.5px;line-height:13px">p17_slave - p17_slave</div>
<div class="A" style="left:1233px;top:866px;line-height:0"><svg width="20" height="10" viewBox="0 0 20 10"><circle cx="4.8" cy="5" r="4.3" fill="#ffa000"/><circle cx="3.1" cy="5" r="1.1" fill="#fff"/><path d="M8 3.3 H18.8 Q20 4.2 18.8 5.4 L18.2 6.3 L17.5 5.8 L16.8 6.6 L16 5.8 L15.2 6.6 L14.4 5.8 L13.6 6.6 L12.8 5.8 L12 6.6 L10.5 6.3 H8 Z" fill="#f29a00"/></svg></div>
<div class="A" style="left:1283px;top:844px;height:17px;background:#0aa5b5;border-radius:4px;color:#f4fbfc;font-size:11px;letter-spacing:0.5px;line-height:15px;padding:0 2.5px 0 4px">add_ip_addresses:add_ip_addresses_1</div>
<div class="A" style="left:1507px;top:844px;height:17px;background:#0aa5b5;border-radius:4px;color:#f4fbfc;font-size:11px;letter-spacing:0.5px;line-height:15px;padding:0 2.5px 0 4px">address_family:ip-v4-only</div>
<div class="A" style="left:1283px;top:865px;height:16px;background:#0aa5b5;border-radius:4px;color:#f4fbfc;font-size:11px;letter-spacing:0.5px;line-height:14px;padding:0 2.5px 0 4px">agent:all-agents</div>
<div class="A" style="left:1283px;top:884px;font-size:11px;color:#23272f;letter-spacing:0.5px;line-height:13px">... (show all)</div>
<div class="A" style="left:445px;top:692px;width:77px;height:9px;background:#ff0000"></div>
<div class="A" style="left:304px;top:935px;width:31px;height:30px;background:#fff;border:1px solid #cdd0dc;border-radius:4px"></div>
<div class="A" style="left:313px;top:940px;width:14px;height:14px;border:2px solid #7cc05a;border-radius:2px;background:#fff"></div>
<svg class="A" style="left:315px;top:942px" width="10" height="9" viewBox="0 0 10 9"><path d="M1 4.5 L4 7.5 L9 1.5" stroke="#2e7d32" stroke-width="1.8" fill="none"/></svg>
<div class="A" style="left:344px;top:937px;width:172px;height:26px;background:#fff;border:2px solid #c5c6cc;border-radius:3px"></div>
<div class="A" style="left:351px;top:942px;width:1px;height:14px;background:#222"></div>
<div class="A" style="left:522px;top:936px;width:59px;height:26px;background:#15d18a;border-radius:5px"></div>
<div class="A" style="left:530.5px;top:941px;font-size:12px;color:#203030;letter-spacing:0.7px;line-height:14px">Search</div>
<div class="A" style="left:1176px;top:941px;font-size:11px;color:#23272f;letter-spacing:0.5px;line-height:13px">Selected hosts:</div>
<div class="A" style="left:1263px;top:936px;width:56px;height:26px;background:#15d18a;border-radius:5px"></div>
<div class="A" style="left:1271.5px;top:941px;font-size:12px;color:#203030;letter-spacing:0.7px;line-height:14px">Delete</div>
<div class="A" style="left:1327px;top:936px;width:41px;height:26px;background:#15d18a;border-radius:5px"></div>
<div class="A" style="left:1335.5px;top:941px;font-size:12px;color:#203030;letter-spacing:0.7px;line-height:14px">Edit</div>
<div class="A" style="left:1376px;top:936px;width:66px;height:26px;background:#15d18a;border-radius:5px"></div>
<div class="A" style="left:1384.5px;top:941px;font-size:12px;color:#203030;letter-spacing:0.7px;line-height:14px">Cleanup</div>
<div class="A" style="left:1450px;top:936px;width:75px;height:26px;background:#15d18a;border-radius:5px"></div>
<div class="A" style="left:1458.5px;top:941px;font-size:12px;color:#203030;letter-spacing:0.7px;line-height:14px">Discovery</div>
<div class="A" style="left:1533px;top:936px;width:83px;height:26px;background:#15d18a;border-radius:5px"></div>
<div class="A" style="left:1541.5px;top:941px;font-size:12px;color:#203030;letter-spacing:0.7px;line-height:14px">Parentscan</div>
<div class="A" style="left:1624px;top:936px;width:69px;height:26px;background:#15d18a;border-radius:5px"></div>
<div class="A" style="left:1632.5px;top:941px;font-size:12px;color:#203030;letter-spacing:0.7px;line-height:14px">Move to:</div>
<div class="A" style="left:1704px;top:936px;width:180px;height:26px;background:#fff;border:1px solid #cfcfd4;border-radius:4px"></div>
<div class="A" style="left:1754px;top:941px;font-size:11px;color:#444;letter-spacing:0.5px;line-height:13px">(select target folder)</div>
<div class="A" style="left:1869px;top:945px;width:0;height:0;border-left:4px solid transparent;border-right:4px solid transparent;border-top:5px solid #666"></div>
</body></html>
